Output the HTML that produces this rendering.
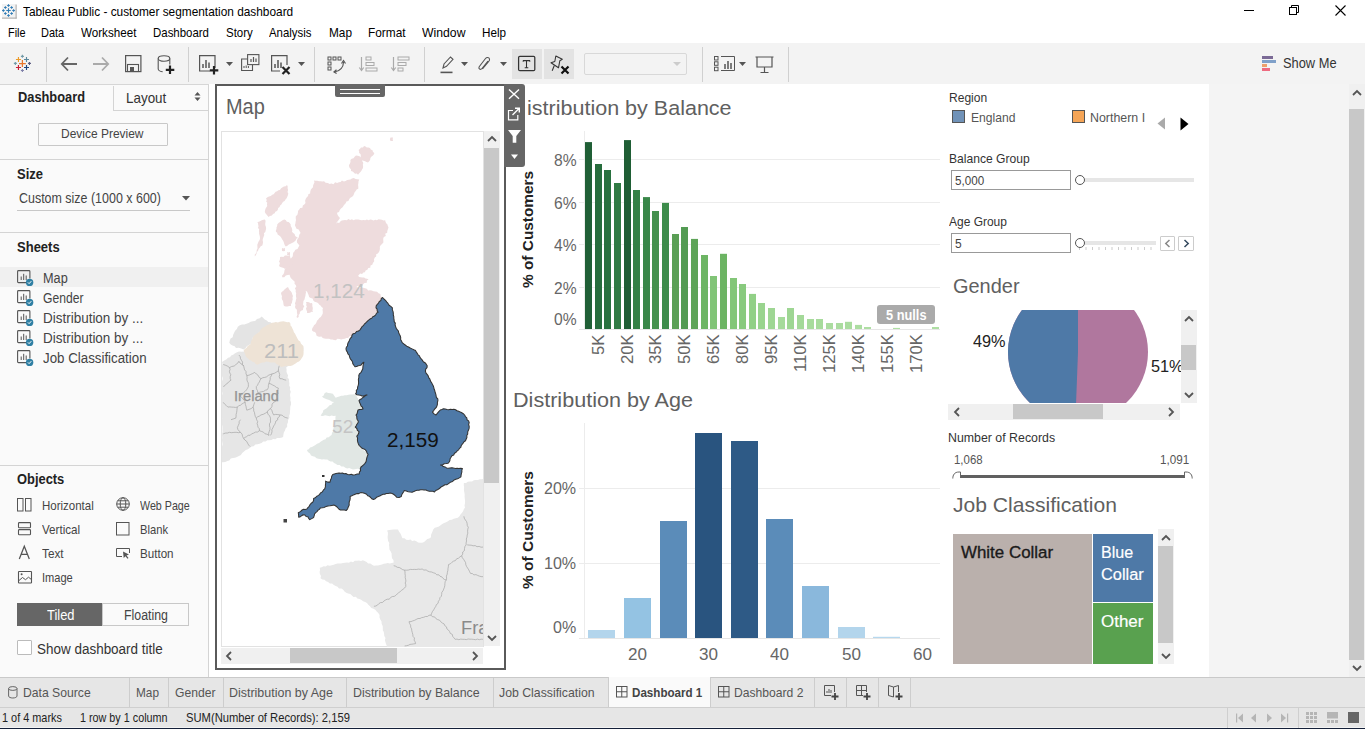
<!DOCTYPE html>
<html><head><meta charset="utf-8">
<style>
*{box-sizing:border-box;margin:0;padding:0}
html,body{width:1365px;height:729px;overflow:hidden;background:#fff;font-family:"Liberation Sans",sans-serif;color:#333;position:relative}
.a{position:absolute}
.t{position:absolute;white-space:nowrap;line-height:1}
svg{position:absolute;overflow:visible}
</style></head><body>
<div class="a" style="left:0.00px;top:0.00px;width:1365.00px;height:43.00px;background:#fff;"></div>
<svg style="left:0;top:0" width="22" height="22" viewBox="0 0 22 22">
 <rect x="2" y="4" width="13.5" height="13.5" fill="#f2f2f2"/>
 <rect x="15.5" y="4.5" width="1.2" height="14" fill="#b0b0b0"/><rect x="2" y="17.5" width="14.7" height="1.2" fill="#b0b0b0"/>
 <g stroke="#2e7bb5" fill="none">
  <path d="M8.5 8.3v4.4M6.3 10.5h4.4" stroke-width="1.1"/>
  <path d="M8.5 4.2v2.6M7.2 5.5h2.6M5.4 6.2v2.6M4.1 7.5h2.6M11.6 6.2v2.6M10.3 7.5h2.6M3.4 9.2v2.6M2.1 10.5h2.6M13.6 9.2v2.6M12.3 10.5h2.6M5.4 12.2v2.6M4.1 13.5h2.6M11.6 12.2v2.6M10.3 13.5h2.6M8.5 14.2v2.6M7.2 15.5h2.6" stroke-width="1.1"/>
 </g>
</svg>
<div class="t" style="left:23.00px;top:5.41px;font-size:13.64px;color:#000;transform:scaleX(0.8701);transform-origin:0 0;">Tableau Public - customer segmentation dashboard</div>
<div class="a" style="left:1244.00px;top:10.00px;width:10.00px;height:1.00px;background:#000;"></div>
<svg style="left:1289px;top:5px" width="11" height="11"><rect x="0.5" y="2.5" width="7" height="7" fill="none" stroke="#000"/><path d="M2.5 2.5V0.5H9.5V7.5H7.5" fill="none" stroke="#000"/></svg>
<svg style="left:1335px;top:5px" width="11" height="11"><path d="M0.5 0.5L10.5 10.5M10.5 0.5L0.5 10.5" stroke="#000" stroke-width="1.1"/></svg>
<div class="t" style="left:7.50px;top:27.29px;font-size:12.60px;color:#000;transform:scaleX(0.8668);transform-origin:0 0;">File</div>
<div class="t" style="left:41.10px;top:27.29px;font-size:12.60px;color:#000;transform:scaleX(0.8717);transform-origin:0 0;">Data</div>
<div class="t" style="left:81.10px;top:27.29px;font-size:12.60px;color:#000;transform:scaleX(0.9234);transform-origin:0 0;">Worksheet</div>
<div class="t" style="left:153.30px;top:27.29px;font-size:12.60px;color:#000;transform:scaleX(0.9085);transform-origin:0 0;">Dashboard</div>
<div class="t" style="left:226.00px;top:27.29px;font-size:12.60px;color:#000;transform:scaleX(0.9113);transform-origin:0 0;">Story</div>
<div class="t" style="left:269.20px;top:27.29px;font-size:12.60px;color:#000;transform:scaleX(0.9058);transform-origin:0 0;">Analysis</div>
<div class="t" style="left:328.50px;top:27.29px;font-size:12.60px;color:#000;transform:scaleX(0.9383);transform-origin:0 0;">Map</div>
<div class="t" style="left:368.30px;top:27.29px;font-size:12.60px;color:#000;transform:scaleX(0.9422);transform-origin:0 0;">Format</div>
<div class="t" style="left:422.10px;top:27.29px;font-size:12.60px;color:#000;transform:scaleX(0.9707);transform-origin:0 0;">Window</div>
<div class="t" style="left:482.40px;top:27.29px;font-size:12.60px;color:#000;transform:scaleX(0.9300);transform-origin:0 0;">Help</div>
<div class="a" style="left:0.00px;top:43.00px;width:1365.00px;height:41.00px;background:#f3f3f3;"></div>
<div class="a" style="left:0.00px;top:84.00px;width:209.00px;height:1.00px;background:#d6d6d6;"></div>
<div class="a" style="left:46.00px;top:47.00px;width:1.00px;height:35.00px;background:#d0d0d0;"></div>
<div class="a" style="left:188.00px;top:47.00px;width:1.00px;height:35.00px;background:#d0d0d0;"></div>
<div class="a" style="left:314.00px;top:47.00px;width:1.00px;height:35.00px;background:#d0d0d0;"></div>
<div class="a" style="left:424.00px;top:47.00px;width:1.00px;height:35.00px;background:#d0d0d0;"></div>
<div class="a" style="left:702.00px;top:47.00px;width:1.00px;height:35.00px;background:#d0d0d0;"></div>
<div class="a" style="left:788.00px;top:47.00px;width:1.00px;height:35.00px;background:#d0d0d0;"></div>
<svg style="left:10px;top:51px" width="26" height="26" viewBox="0 0 26 26">
 <g fill="none">
 <path d="M12.4 9.1v6.8M9 12.5h6.8" stroke="#e8762c" stroke-width="1.25"/>
 <path d="M8.45 5.95v5M5.95 8.45h5" stroke="#eb9b2b" stroke-width="1.15"/>
 <path d="M16.5 5.95v5M14 8.45h5" stroke="#5b879b" stroke-width="1.15"/>
 <path d="M8.45 14v5M5.95 16.5h5" stroke="#c72037" stroke-width="1.15"/>
 <path d="M16.5 14v5M14 16.5h5" stroke="#1f457e" stroke-width="1.15"/>
 <path d="M12.4 3.85v3M10.9 5.35h3" stroke="#7199a6" stroke-width="1.1"/>
 <path d="M12.4 17.95v3M10.9 19.45h3" stroke="#7e7fa8" stroke-width="1.1"/>
 <path d="M5.35 10.9v3M3.85 12.4h3" stroke="#7199a6" stroke-width="1.1"/>
 <path d="M19.45 10.9v3M17.95 12.4h3" stroke="#59597f" stroke-width="1.1"/>
 </g></svg>
<svg style="left:60px;top:56px" width="18" height="16"><path d="M17 8H2M8 1.5L1.8 8L8 14.5" fill="none" stroke="#666" stroke-width="1.8"/></svg>
<svg style="left:92px;top:56px" width="18" height="16"><path d="M1 8H16M10 1.5L16.2 8L10 14.5" fill="none" stroke="#aaa" stroke-width="1.8"/></svg>
<svg style="left:125px;top:55px" width="17" height="18"><rect x="0.6" y="0.6" width="15.3" height="16" fill="none" stroke="#555" stroke-width="1.2"/><rect x="2.5" y="9.5" width="11" height="7" fill="none" stroke="#555" stroke-width="1.1"/><rect x="5" y="12" width="4" height="4.5" fill="#555"/></svg>
<svg style="left:157px;top:55px" width="18" height="20"><ellipse cx="7" cy="3.5" rx="5.8" ry="2.7" fill="none" stroke="#555" stroke-width="1.1"/><path d="M1.2 3.5v10.5c0 1.5 2.5 2.6 4.5 2.7M12.8 3.5v6" fill="none" stroke="#555" stroke-width="1.1"/><path d="M13 10.5v8.5M8.8 14.8h8.5" stroke="#222" stroke-width="2.2"/></svg>
<svg style="left:199px;top:55px" width="22" height="20"><path d="M16 13V0.6H0.6V16H11" fill="none" stroke="#555" stroke-width="1.2"/><path d="M4 13V9M7 13V5M10 13V7.5" stroke="#555" stroke-width="1.5"/><path d="M15 11v8.5M10.8 15.3h8.5" stroke="#222" stroke-width="2.2"/></svg>
<svg style="left:226px;top:62px" width="7" height="4"><path d="M0 0H7L3.5 4Z" fill="#555"/></svg>
<svg style="left:241px;top:54px" width="19" height="18"><rect x="6.6" y="0.6" width="11.3" height="10" fill="#f3f3f3" stroke="#555" stroke-width="1.1"/><path d="M10 8V5M12.5 8V3M15 8V4.5" stroke="#555" stroke-width="1.2"/><path d="M6 5H0.6V16.5H11.5V11" fill="none" stroke="#555" stroke-width="1.1"/><path d="M3 14V12M5.2 14V11.5M7.4 14V12" stroke="#555" stroke-width="1"/></svg>
<svg style="left:271px;top:55px" width="22" height="20"><path d="M16 10V0.6H0.6V16H9" fill="none" stroke="#555" stroke-width="1.2"/><path d="M4 13V9M7 13V5M10 13V7.5" stroke="#555" stroke-width="1.5"/><path d="M11.5 12l7 7M18.5 12l-7 7" stroke="#222" stroke-width="2.2"/></svg>
<svg style="left:298px;top:62px" width="7" height="4"><path d="M0 0H7L3.5 4Z" fill="#555"/></svg>
<svg style="left:327px;top:56px" width="19" height="19"><g fill="none" stroke="#555" stroke-width="1">
<rect x="1" y="1" width="3" height="3"/><rect x="6" y="1" width="3" height="3"/><rect x="11" y="1" width="3" height="3"/>
<rect x="1" y="6" width="3" height="3"/><rect x="1" y="11" width="3" height="3"/></g>
<path d="M16.5 6c0 5-3.5 9-9 10" fill="none" stroke="#555" stroke-width="1.2"/><path d="M14.5 7.5l2-3 2 3M9.5 13.8l-2.5 2.2 2.6 1.6" fill="none" stroke="#555" stroke-width="1.2"/></svg>
<svg style="left:359px;top:56px" width="20" height="18"><path d="M2.5 1v13M0.3 11.5l2.2 3 2.2-3" fill="none" stroke="#aaa" stroke-width="1.2"/><rect x="7" y="1" width="5" height="3" fill="none" stroke="#aaa"/><rect x="7" y="6.5" width="8" height="3" fill="none" stroke="#aaa"/><rect x="7" y="12" width="11" height="3" fill="none" stroke="#aaa"/></svg>
<svg style="left:391px;top:56px" width="20" height="18"><path d="M2.5 1v13M0.3 11.5l2.2 3 2.2-3" fill="none" stroke="#aaa" stroke-width="1.2"/><rect x="7" y="1" width="11" height="3" fill="none" stroke="#aaa"/><rect x="7" y="6.5" width="8" height="3" fill="none" stroke="#aaa"/><rect x="7" y="12" width="5" height="3" fill="none" stroke="#aaa"/></svg>
<svg style="left:440px;top:56px" width="14" height="18"><path d="M3 12l1-4 6.5-7 2.5 2.3-6.5 7z" fill="none" stroke="#555" stroke-width="1.1"/><rect x="0.5" y="15.6" width="12" height="1.6" fill="#555"/></svg>
<svg style="left:461px;top:62px" width="7" height="4"><path d="M0 0H7L3.5 4Z" fill="#555"/></svg>
<svg style="left:477px;top:56px" width="15" height="17"><path d="M11 5L5 12.5c-1.5 1.8-4 0.3-2.8-1.8L8.5 2.5c1-1.3 3.5-1.5 4 0.5 0.3 1-0.2 1.8-0.8 2.5L5.5 13" fill="none" stroke="#555" stroke-width="1.1"/></svg>
<svg style="left:500px;top:62px" width="7" height="4"><path d="M0 0H7L3.5 4Z" fill="#555"/></svg>
<div class="a" style="left:512.00px;top:49.00px;width:30.00px;height:30.00px;background:#e3e3e3;"></div>
<div class="a" style="left:544.00px;top:49.00px;width:30.00px;height:30.00px;background:#e3e3e3;"></div>
<svg style="left:517px;top:55px" width="20" height="18"><rect x="1.6" y="1.4" width="16.2" height="14.2" rx="1.2" fill="none" stroke="#333" stroke-width="1.25"/><path d="M6 5.6h7M6.2 5.4v1.4M12.8 5.4v1.4M9.5 5.6v7.2M7.7 12.7h3.6" fill="none" stroke="#333" stroke-width="1.05"/></svg>
<svg style="left:545px;top:50px" width="30" height="30"><path d="M10.8 6L17.3 9.3L14.8 10.8L13.5 17.8L6 12.8L9.8 11.5Z" fill="none" stroke="#333" stroke-width="1.05" stroke-linejoin="round"/><path d="M9.3 15.5L7.2 20.8" stroke="#333" stroke-width="1.05"/><path d="M16.5 16.5L23.5 23.5M23.5 16.5L16.5 23.5" stroke="#111" stroke-width="2.2"/></svg>
<div class="a" style="left:583.5px;top:52.5px;width:103px;height:22px;border:1px solid #d8d8d8;border-radius:2px;background:#f3f3f3"></div>
<svg style="left:673px;top:62px" width="8" height="5"><path d="M0 0H8L4 4Z" fill="#ccc"/></svg>
<svg style="left:714px;top:56px" width="22" height="16"><g fill="none" stroke="#555" stroke-width="1"><rect x="0.5" y="0.5" width="3.5" height="3.5"/><rect x="0.5" y="5.8" width="3.5" height="3.5"/><rect x="0.5" y="11.2" width="3.5" height="3.5"/><path d="M7 0.5H20.5V14.5H7"/></g><path d="M11 13V8M14 13V5M17 13V7" stroke="#555" stroke-width="1.5"/></svg>
<svg style="left:739px;top:62px" width="7" height="4"><path d="M0 0H7L3.5 4Z" fill="#555"/></svg>
<svg style="left:755px;top:56px" width="19" height="18"><path d="M0.5 1h18M2 1v10h15V1M9.5 11v5M5.5 16.5h8" fill="none" stroke="#555" stroke-width="1.2"/></svg>
<div class="a" style="left:1262.00px;top:56.00px;width:11.00px;height:3.00px;background:#7b6a96;"></div>
<div class="a" style="left:1262.00px;top:60.00px;width:14.00px;height:3.00px;background:#7fa0c9;"></div>
<div class="a" style="left:1262.00px;top:64.00px;width:5.00px;height:3.00px;background:#eda06c;"></div>
<div class="a" style="left:1262.00px;top:68.00px;width:8.00px;height:3.00px;background:#ee6b80;"></div>
<div class="t" style="left:1282.50px;top:56.38px;font-size:14.85px;color:#333;transform:scaleX(0.8659);transform-origin:0 0;">Show Me</div>
<div class="a" style="left:0.00px;top:85.00px;width:208.00px;height:592.00px;background:#fafafa;"></div>
<div class="a" style="left:208.00px;top:85.00px;width:1.00px;height:592.00px;background:#d4d4d4;"></div>
<div class="a" style="left:113.00px;top:86.00px;width:1.00px;height:24.00px;background:#d4d4d4;"></div>
<div class="a" style="left:113.00px;top:110.00px;width:95.00px;height:1.00px;background:#d4d4d4;"></div>
<div class="t" style="left:17.50px;top:90.28px;font-size:14.96px;color:#222;font-weight:bold;transform:scaleX(0.8574);transform-origin:0 0;">Dashboard</div>
<div class="t" style="left:126.20px;top:90.84px;font-size:14.30px;color:#333;transform:scaleX(0.9386);transform-origin:0 0;">Layout</div>
<svg style="left:194px;top:91px" width="7" height="11"><path d="M0.5 4.5L3.5 1L6.5 4.5Z M0.5 6.5L3.5 10L6.5 6.5Z" fill="#555"/></svg>
<div class="a" style="left:38px;top:123px;width:130px;height:23px;border:1px solid #c8c8c8;background:#fafafa;border-radius:1px"></div>
<div class="t" style="left:61.30px;top:127.41px;font-size:13.64px;color:#444;transform:scaleX(0.8787);transform-origin:0 0;">Device Preview</div>
<div class="a" style="left:0.00px;top:159.00px;width:208.00px;height:1.00px;background:#d4d4d4;"></div>
<div class="t" style="left:17.30px;top:167.47px;font-size:14.74px;color:#222;font-weight:bold;transform:scaleX(0.8815);transform-origin:0 0;">Size</div>
<div class="t" style="left:18.50px;top:192.31px;font-size:13.75px;color:#444;transform:scaleX(0.9057);transform-origin:0 0;">Custom size (1000 x 600)</div>
<svg style="left:182px;top:196px" width="8" height="5"><path d="M0 0H8L4 4.5Z" fill="#555"/></svg>
<div class="a" style="left:17.00px;top:210.00px;width:173.00px;height:1.00px;background:#c8c8c8;"></div>
<div class="a" style="left:0.00px;top:232.00px;width:208.00px;height:1.00px;background:#d4d4d4;"></div>
<div class="t" style="left:17.30px;top:240.47px;font-size:14.74px;color:#222;font-weight:bold;transform:scaleX(0.8833);transform-origin:0 0;">Sheets</div>
<div class="a" style="left:0.00px;top:267.00px;width:208.00px;height:20.00px;background:#f0f0f0;"></div>
<svg style="left:17px;top:270px" width="18" height="18"><path d="M9.8 12.6H1.5Q0.6 12.6 0.6 11.7V1.5Q0.6 0.6 1.5 0.6H12Q12.9 0.6 12.9 1.5V8.5" fill="none" stroke="#555" stroke-width="1.1"/><path d="M4.2 10V6.5M6.7 10V3.8M9.2 10V5.5" stroke="#555" stroke-width="1"/><circle cx="12.6" cy="12.4" r="3.7" fill="#2f7fa3"/><path d="M10.9 12.4l1.2 1.2 2.2-2.4" fill="none" stroke="#fff" stroke-width="1"/></svg>
<div class="t" style="left:42.50px;top:270.66px;font-size:14.52px;color:#444;transform:scaleX(0.8744);transform-origin:0 0;">Map</div>
<svg style="left:17px;top:290px" width="18" height="18"><path d="M9.8 12.6H1.5Q0.6 12.6 0.6 11.7V1.5Q0.6 0.6 1.5 0.6H12Q12.9 0.6 12.9 1.5V8.5" fill="none" stroke="#555" stroke-width="1.1"/><path d="M4.2 10V6.5M6.7 10V3.8M9.2 10V5.5" stroke="#555" stroke-width="1"/><circle cx="12.6" cy="12.4" r="3.7" fill="#2f7fa3"/><path d="M10.9 12.4l1.2 1.2 2.2-2.4" fill="none" stroke="#fff" stroke-width="1"/></svg>
<div class="t" style="left:42.50px;top:290.66px;font-size:14.52px;color:#444;transform:scaleX(0.8362);transform-origin:0 0;">Gender</div>
<svg style="left:17px;top:310px" width="18" height="18"><path d="M9.8 12.6H1.5Q0.6 12.6 0.6 11.7V1.5Q0.6 0.6 1.5 0.6H12Q12.9 0.6 12.9 1.5V8.5" fill="none" stroke="#555" stroke-width="1.1"/><path d="M4.2 10V6.5M6.7 10V3.8M9.2 10V5.5" stroke="#555" stroke-width="1"/><circle cx="12.6" cy="12.4" r="3.7" fill="#2f7fa3"/><path d="M10.9 12.4l1.2 1.2 2.2-2.4" fill="none" stroke="#fff" stroke-width="1"/></svg>
<div class="t" style="left:42.50px;top:310.66px;font-size:14.52px;color:#444;transform:scaleX(0.9275);transform-origin:0 0;">Distribution by ...</div>
<svg style="left:17px;top:330px" width="18" height="18"><path d="M9.8 12.6H1.5Q0.6 12.6 0.6 11.7V1.5Q0.6 0.6 1.5 0.6H12Q12.9 0.6 12.9 1.5V8.5" fill="none" stroke="#555" stroke-width="1.1"/><path d="M4.2 10V6.5M6.7 10V3.8M9.2 10V5.5" stroke="#555" stroke-width="1"/><circle cx="12.6" cy="12.4" r="3.7" fill="#2f7fa3"/><path d="M10.9 12.4l1.2 1.2 2.2-2.4" fill="none" stroke="#fff" stroke-width="1"/></svg>
<div class="t" style="left:42.50px;top:330.66px;font-size:14.52px;color:#444;transform:scaleX(0.9275);transform-origin:0 0;">Distribution by ...</div>
<svg style="left:17px;top:350px" width="18" height="18"><path d="M9.8 12.6H1.5Q0.6 12.6 0.6 11.7V1.5Q0.6 0.6 1.5 0.6H12Q12.9 0.6 12.9 1.5V8.5" fill="none" stroke="#555" stroke-width="1.1"/><path d="M4.2 10V6.5M6.7 10V3.8M9.2 10V5.5" stroke="#555" stroke-width="1"/><circle cx="12.6" cy="12.4" r="3.7" fill="#2f7fa3"/><path d="M10.9 12.4l1.2 1.2 2.2-2.4" fill="none" stroke="#fff" stroke-width="1"/></svg>
<div class="t" style="left:42.50px;top:350.66px;font-size:14.52px;color:#444;transform:scaleX(0.9169);transform-origin:0 0;">Job Classification</div>
<div class="a" style="left:0.00px;top:465.00px;width:208.00px;height:1.00px;background:#d4d4d4;"></div>
<div class="t" style="left:17.30px;top:472.47px;font-size:14.74px;color:#222;font-weight:bold;transform:scaleX(0.8748);transform-origin:0 0;">Objects</div>
<div class="t" style="left:42.40px;top:498.97px;font-size:12.98px;color:#444;transform:scaleX(0.8864);transform-origin:0 0;">Horizontal</div>
<div class="t" style="left:42.40px;top:522.97px;font-size:12.98px;color:#444;transform:scaleX(0.8974);transform-origin:0 0;">Vertical</div>
<div class="t" style="left:42.40px;top:546.97px;font-size:12.98px;color:#444;transform:scaleX(0.9074);transform-origin:0 0;">Text</div>
<div class="t" style="left:42.40px;top:570.97px;font-size:12.98px;color:#444;transform:scaleX(0.8537);transform-origin:0 0;">Image</div>
<div class="t" style="left:140.20px;top:498.97px;font-size:12.98px;color:#444;transform:scaleX(0.8248);transform-origin:0 0;">Web Page</div>
<div class="t" style="left:140.20px;top:522.97px;font-size:12.98px;color:#444;transform:scaleX(0.8623);transform-origin:0 0;">Blank</div>
<div class="t" style="left:140.20px;top:546.97px;font-size:12.98px;color:#444;transform:scaleX(0.8953);transform-origin:0 0;">Button</div>
<svg style="left:17px;top:498px" width="15" height="14"><rect x="0.5" y="0.5" width="5.5" height="12.5" fill="none" stroke="#555"/><rect x="8.5" y="0.5" width="5.5" height="12.5" fill="none" stroke="#555"/></svg>
<svg style="left:17px;top:522px" width="15" height="14"><rect x="1.5" y="0.6" width="12" height="5.2" rx="0.8" fill="none" stroke="#555" stroke-width="1.1"/><rect x="1.5" y="7.6" width="12" height="5.2" rx="0.8" fill="none" stroke="#555" stroke-width="1.1"/></svg>
<svg style="left:18px;top:545px" width="13" height="15"><path d="M1.3 14L6.3 1.2L11.3 14M3.2 9.3h6.2" fill="none" stroke="#555" stroke-width="1.25"/></svg>
<svg style="left:17px;top:570px" width="16" height="14"><rect x="1.5" y="1.5" width="13" height="11.5" rx="0.6" fill="none" stroke="#555" stroke-width="1.1"/><path d="M2 10.5l3.5-3 3 2.2 3-2.5 2.5 2" fill="none" stroke="#555" stroke-width="1"/><circle cx="4.6" cy="4.3" r="1" fill="#555"/></svg>
<svg style="left:116px;top:497px" width="15" height="15"><g fill="none" stroke="#555" stroke-width="1"><circle cx="7" cy="7" r="6.3"/><ellipse cx="7" cy="7" rx="2.8" ry="6.3"/><path d="M0.7 7h12.6M1.8 3.8h10.4M1.8 10.2h10.4"/></g></svg>
<svg style="left:116px;top:522px" width="15" height="15"><rect x="0.5" y="0.5" width="12.5" height="12.5" fill="none" stroke="#555"/></svg>
<svg style="left:116px;top:548px" width="15" height="12"><path d="M6 8.5H0.5V0.5H13.5V5" fill="none" stroke="#555"/><path d="M7 3.5l6 3-2.5 1 2 2.5-1 .8-2-2.5-1.8 1.8z" fill="#555"/></svg>
<div class="a" style="left:17.00px;top:603.00px;width:86.00px;height:23.00px;background:#666;"></div>
<div class="a" style="left:102px;top:603px;width:87px;height:23px;border:1px solid #c8c8c8;background:#fafafa"></div>
<div class="t" style="left:46.50px;top:608.03px;font-size:14.08px;color:#fff;transform:scaleX(0.9168);transform-origin:0 0;">Tiled</div>
<div class="t" style="left:123.50px;top:608.03px;font-size:14.08px;color:#444;transform:scaleX(0.8784);transform-origin:0 0;">Floating</div>
<div class="a" style="left:17px;top:640px;width:15px;height:15px;border:1px solid #bbb;background:#fff;border-radius:1px"></div>
<div class="t" style="left:37.00px;top:641.66px;font-size:14.52px;color:#333;transform:scaleX(0.9277);transform-origin:0 0;">Show dashboard title</div>
<div class="a" style="left:209.00px;top:84.00px;width:1140.00px;height:593.00px;background:#f4f4f4;"></div>
<div class="a" style="left:209.00px;top:84.00px;width:1000.00px;height:593.00px;background:#fff;"></div>
<div class="a" style="left:1349.00px;top:84.00px;width:16.00px;height:593.00px;background:#f0f0f0;"></div>
<div class="a" style="left:1349.00px;top:109.00px;width:15.00px;height:551.00px;background:#c8c8c8;"></div>
<svg style="left:1352px;top:90px" width="10" height="6"><path d="M1 5L5 1L9 5" fill="none" stroke="#555" stroke-width="1.8"/></svg>
<svg style="left:1352px;top:665px" width="10" height="6"><path d="M1 1L5 5L9 1" fill="none" stroke="#555" stroke-width="1.8"/></svg>
<div class="a" style="left:525px;top:90px;width:220px;height:30px;overflow:hidden"><div class="t" style="left:1.70px;top:6.55px;font-size:21.12px;color:#606060;transform:scaleX(1.0196);transform-origin:0 0;">istribution by Balance</div>
</div>
<div class="a" style="left:584.00px;top:131.00px;width:1.00px;height:198.00px;background:#ececec;"></div>
<div class="a" style="left:579.00px;top:159.00px;width:361.00px;height:1.00px;background:#ececec;"></div>
<div class="a" style="left:579.00px;top:202.00px;width:361.00px;height:1.00px;background:#ececec;"></div>
<div class="a" style="left:579.00px;top:244.00px;width:361.00px;height:1.00px;background:#ececec;"></div>
<div class="a" style="left:579.00px;top:287.00px;width:361.00px;height:1.00px;background:#ececec;"></div>
<div class="a" style="left:579.00px;top:329.00px;width:361.00px;height:1.00px;background:#e6e6e6;"></div>
<svg style="left:0;top:0" width="1365" height="729"><rect x="585" y="142.1" width="7" height="186.9" fill="#205f36"/><rect x="595" y="164.0" width="7" height="165.0" fill="#276d3d"/><rect x="604" y="170.0" width="7" height="159.0" fill="#29713f"/><rect x="614" y="183.0" width="7" height="146.0" fill="#307b44"/><rect x="624" y="140.1" width="7" height="188.9" fill="#1f5e35"/><rect x="633" y="190.0" width="7" height="139.0" fill="#348146"/><rect x="643" y="197.1" width="7" height="131.9" fill="#398749"/><rect x="652" y="211.0" width="7" height="118.0" fill="#45914e"/><rect x="662" y="202.9" width="7" height="126.1" fill="#3d8c4b"/><rect x="672" y="234.0" width="7" height="95.0" fill="#5a9f55"/><rect x="681" y="227.0" width="7" height="102.0" fill="#539b53"/><rect x="691" y="238.9" width="7" height="90.1" fill="#5ea458"/><rect x="701" y="255.0" width="7" height="74.0" fill="#6db564"/><rect x="710" y="276.0" width="7" height="53.0" fill="#81c477"/><rect x="720" y="253.8" width="7" height="75.2" fill="#6cb463"/><rect x="730" y="278.0" width="7" height="51.0" fill="#83c678"/><rect x="739" y="284.0" width="7" height="45.0" fill="#88ca7e"/><rect x="749" y="293.9" width="7" height="35.1" fill="#91d086"/><rect x="758" y="303.0" width="7" height="26.0" fill="#99d48e"/><rect x="768" y="308.0" width="7" height="21.0" fill="#9ed693"/><rect x="778" y="317.0" width="7" height="12.0" fill="#a6da9b"/><rect x="787" y="308.0" width="7" height="21.0" fill="#9ed693"/><rect x="797" y="315.0" width="7" height="14.0" fill="#a4d999"/><rect x="807" y="319.0" width="7" height="10.0" fill="#a7db9c"/><rect x="816" y="319.0" width="7" height="10.0" fill="#a7db9c"/><rect x="826" y="323.0" width="7" height="6.0" fill="#abdca0"/><rect x="836" y="323.0" width="7" height="6.0" fill="#abdca0"/><rect x="845" y="321.8" width="7" height="7.2" fill="#aadc9f"/><rect x="855" y="324.9" width="7" height="4.1" fill="#acdda1"/><rect x="864" y="327.0" width="7" height="2.0" fill="#aedea3"/><rect x="893" y="327.9" width="7" height="1.1" fill="#afdfa4"/><rect x="932" y="327.0" width="7" height="2.0" fill="#aedea3"/></svg>
<div class="t" style="left:553.70px;top:151.67px;font-size:16.50px;color:#666;transform:scaleX(0.9477);transform-origin:0 0;">8%</div>
<div class="t" style="left:553.70px;top:194.67px;font-size:16.50px;color:#666;transform:scaleX(0.9477);transform-origin:0 0;">6%</div>
<div class="t" style="left:553.70px;top:236.67px;font-size:16.50px;color:#666;transform:scaleX(0.9477);transform-origin:0 0;">4%</div>
<div class="t" style="left:553.70px;top:279.68px;font-size:16.50px;color:#666;transform:scaleX(0.9477);transform-origin:0 0;">2%</div>
<div class="t" style="left:553.70px;top:310.68px;font-size:16.50px;color:#666;transform:scaleX(0.9477);transform-origin:0 0;">0%</div>
<div class="t" style="left:519.80px;top:287.50px;font-size:15.40px;color:#222;font-weight:bold;transform:rotate(-90deg);transform-origin:0 0;">% of Customers</div>
<div class="t" style="left:590.64px;top:354.65px;font-size:16.00px;color:#666;transform:rotate(-90deg) scaleX(1.0400);transform-origin:0 0;">5K</div>
<div class="t" style="left:619.54px;top:363.91px;font-size:16.00px;color:#666;transform:rotate(-90deg) scaleX(1.0400);transform-origin:0 0;">20K</div>
<div class="t" style="left:648.45px;top:363.91px;font-size:16.00px;color:#666;transform:rotate(-90deg) scaleX(1.0400);transform-origin:0 0;">35K</div>
<div class="t" style="left:677.36px;top:363.91px;font-size:16.00px;color:#666;transform:rotate(-90deg) scaleX(1.0400);transform-origin:0 0;">50K</div>
<div class="t" style="left:706.27px;top:363.91px;font-size:16.00px;color:#666;transform:rotate(-90deg) scaleX(1.0400);transform-origin:0 0;">65K</div>
<div class="t" style="left:735.18px;top:363.91px;font-size:16.00px;color:#666;transform:rotate(-90deg) scaleX(1.0400);transform-origin:0 0;">80K</div>
<div class="t" style="left:764.08px;top:363.91px;font-size:16.00px;color:#666;transform:rotate(-90deg) scaleX(1.0400);transform-origin:0 0;">95K</div>
<div class="t" style="left:792.99px;top:371.93px;font-size:16.00px;color:#666;transform:rotate(-90deg) scaleX(1.0400);transform-origin:0 0;">110K</div>
<div class="t" style="left:821.90px;top:373.16px;font-size:16.00px;color:#666;transform:rotate(-90deg) scaleX(1.0400);transform-origin:0 0;">125K</div>
<div class="t" style="left:850.81px;top:373.16px;font-size:16.00px;color:#666;transform:rotate(-90deg) scaleX(1.0400);transform-origin:0 0;">140K</div>
<div class="t" style="left:879.72px;top:373.16px;font-size:16.00px;color:#666;transform:rotate(-90deg) scaleX(1.0400);transform-origin:0 0;">155K</div>
<div class="t" style="left:908.62px;top:373.16px;font-size:16.00px;color:#666;transform:rotate(-90deg) scaleX(1.0400);transform-origin:0 0;">170K</div>
<div class="a" style="left:877px;top:305px;width:58px;height:18.5px;background:#aaa;border-radius:3px"></div>
<div class="t" style="left:886.00px;top:308.35px;font-size:14.30px;color:#fff;font-weight:bold;transform:scaleX(0.8941);transform-origin:0 0;">5 nulls</div>
<div class="t" style="left:513.20px;top:389.15px;font-size:21.12px;color:#606060;transform:scaleX(1.0227);transform-origin:0 0;">Distribution by Age</div>
<div class="a" style="left:584.00px;top:423.00px;width:1.00px;height:215.00px;background:#ececec;"></div>
<div class="a" style="left:579.00px;top:488.00px;width:361.00px;height:1.00px;background:#ececec;"></div>
<div class="a" style="left:579.00px;top:563.00px;width:361.00px;height:1.00px;background:#ececec;"></div>
<div class="a" style="left:579.00px;top:638.00px;width:361.00px;height:1.00px;background:#e6e6e6;"></div>
<svg style="left:0;top:0" width="1365" height="729"><rect x="588" y="630.0" width="27" height="8.0" fill="#b3d5ec"/><rect x="624" y="598.0" width="27" height="40.0" fill="#94c3e3"/><rect x="660" y="521.0" width="27" height="117.0" fill="#5b8cb9"/><rect x="695" y="433.0" width="27" height="205.0" fill="#29547f"/><rect x="731" y="441.0" width="27" height="197.0" fill="#2e5a86"/><rect x="766" y="519.0" width="27" height="119.0" fill="#5b8cb9"/><rect x="802" y="586.0" width="27" height="52.0" fill="#8ab8dc"/><rect x="838" y="627.0" width="27" height="11.0" fill="#b3d5ec"/><rect x="873" y="636.8" width="27" height="1.2" fill="#b6d8ee"/></svg>
<div class="t" style="left:544.18px;top:480.18px;font-size:16.50px;color:#666;transform:scaleX(0.9727);transform-origin:0 0;">20%</div>
<div class="t" style="left:544.18px;top:555.18px;font-size:16.50px;color:#666;transform:scaleX(0.9727);transform-origin:0 0;">10%</div>
<div class="t" style="left:553.10px;top:619.18px;font-size:16.50px;color:#666;transform:scaleX(0.9727);transform-origin:0 0;">0%</div>
<div class="t" style="left:519.80px;top:588.50px;font-size:15.40px;color:#222;font-weight:bold;transform:rotate(-90deg) scaleX(1.0066);transform-origin:0 0;">% of Customers</div>
<div class="t" style="left:627.80px;top:646.18px;font-size:16.50px;color:#666;transform:scaleX(1.0352);transform-origin:0 0;">20</div>
<div class="t" style="left:698.50px;top:646.18px;font-size:16.50px;color:#666;transform:scaleX(1.0352);transform-origin:0 0;">30</div>
<div class="t" style="left:769.50px;top:646.18px;font-size:16.50px;color:#666;transform:scaleX(1.0352);transform-origin:0 0;">40</div>
<div class="t" style="left:841.50px;top:646.18px;font-size:16.50px;color:#666;transform:scaleX(1.0352);transform-origin:0 0;">50</div>
<div class="t" style="left:912.50px;top:646.18px;font-size:16.50px;color:#666;transform:scaleX(1.0352);transform-origin:0 0;">60</div>
<div class="t" style="left:948.80px;top:90.67px;font-size:12.98px;color:#333;transform:scaleX(0.9287);transform-origin:0 0;">Region</div>
<div class="a" style="left:952.00px;top:110.00px;width:13.00px;height:13.00px;background:#7092b8;border:1px solid #555;"></div>
<div class="t" style="left:970.60px;top:110.89px;font-size:13.42px;color:#555;transform:scaleX(0.9035);transform-origin:0 0;">England</div>
<div class="a" style="left:1072.00px;top:110.00px;width:13.00px;height:13.00px;background:#f5a557;border:1px solid #555;"></div>
<div class="a" style="left:1090px;top:105px;width:55px;height:20px;overflow:hidden"><div class="t" style="left:0.40px;top:5.89px;font-size:13.42px;color:#555;transform:scaleX(0.9250);transform-origin:0 0;">Northern Ireland</div>
</div>
<svg style="left:1157px;top:117px" width="9" height="13"><path d="M8 0.5V12.5L0.5 6.5Z" fill="#aaa"/></svg>
<svg style="left:1180px;top:117px" width="9" height="14"><path d="M0.5 0.5V13.5L8.5 7Z" fill="#000"/></svg>
<div class="t" style="left:948.80px;top:151.97px;font-size:12.98px;color:#333;transform:scaleX(0.9320);transform-origin:0 0;">Balance Group</div>
<div class="a" style="left:951px;top:170px;width:120px;height:20px;border:1px solid #999;background:#fff"></div>
<div class="t" style="left:955.00px;top:174.28px;font-size:13.20px;color:#444;transform:scaleX(0.8840);transform-origin:0 0;">5,000</div>
<div class="a" style="left:1083.00px;top:177.50px;width:111.00px;height:4.00px;background:#e6e6e6;"></div>
<div class="a" style="left:1074.5px;top:174.5px;width:10px;height:10px;border:1.2px solid #555;border-radius:50%;background:#fff"></div>
<div class="t" style="left:948.50px;top:214.97px;font-size:12.98px;color:#333;transform:scaleX(0.9239);transform-origin:0 0;">Age Group</div>
<div class="a" style="left:951px;top:233px;width:120px;height:20px;border:1px solid #999;background:#fff"></div>
<div class="t" style="left:955.40px;top:237.08px;font-size:13.20px;color:#444;transform:scaleX(0.9091);transform-origin:0 0;">5</div>
<div class="a" style="left:1083.00px;top:240.50px;width:73.00px;height:4.00px;background:#e6e6e6;"></div>
<svg style="left:1079px;top:247px" width="80" height="4"><rect x="0.0" y="0" width="1" height="3" fill="#ccc"/><rect x="6.5" y="0" width="1" height="3" fill="#ccc"/><rect x="13.0" y="0" width="1" height="3" fill="#ccc"/><rect x="19.5" y="0" width="1" height="3" fill="#ccc"/><rect x="26.0" y="0" width="1" height="3" fill="#ccc"/><rect x="32.5" y="0" width="1" height="3" fill="#ccc"/><rect x="39.0" y="0" width="1" height="3" fill="#ccc"/><rect x="45.5" y="0" width="1" height="3" fill="#ccc"/><rect x="52.0" y="0" width="1" height="3" fill="#ccc"/><rect x="58.5" y="0" width="1" height="3" fill="#ccc"/><rect x="65.0" y="0" width="1" height="3" fill="#ccc"/><rect x="71.5" y="0" width="1" height="3" fill="#ccc"/></svg>
<div class="a" style="left:1074.5px;top:237.5px;width:10px;height:10px;border:1.2px solid #555;border-radius:50%;background:#fff"></div>
<div class="a" style="left:1159.5px;top:235.5px;width:15px;height:15.5px;border:1px solid #ccc;background:#fff;border-radius:1px"></div>
<div class="a" style="left:1178px;top:235.5px;width:16px;height:15.5px;border:1px solid #ccc;background:#fff;border-radius:1px"></div>
<svg style="left:1163.5px;top:239px" width="7" height="9"><path d="M5.5 1L1.8 4.5L5.5 8" fill="none" stroke="#888" stroke-width="1.5"/></svg>
<svg style="left:1182.5px;top:239px" width="7" height="9"><path d="M1.5 1L5.2 4.5L1.5 8" fill="none" stroke="#34495e" stroke-width="1.5"/></svg>
<div class="t" style="left:953.00px;top:275.62px;font-size:20.68px;color:#606060;transform:scaleX(0.9655);transform-origin:0 0;">Gender</div>
<svg style="left:0;top:0" width="1365" height="729"><defs><clipPath id="pc"><rect x="947" y="310" width="234" height="93"/></clipPath></defs><g clip-path="url(#pc)"><circle cx="1078" cy="352" r="70" fill="#b0779e"/><path d="M1078 352 L1075.36 421.95 A70 70 0 0 1 1078 282 Z" fill="#4e79a7"/></g></svg>
<div class="t" style="left:973.20px;top:334.05px;font-size:15.71px;color:#222;transform:scaleX(1.0369);transform-origin:0 0;">49%</div>
<div class="a" style="left:1150px;top:355px;width:31px;height:22px;overflow:hidden"><div class="t" style="left:0.80px;top:4.05px;font-size:15.71px;color:#222;transform:scaleX(1.0369);transform-origin:0 0;">51%</div>
</div>
<div class="a" style="left:1181.00px;top:310.00px;width:16.00px;height:93.00px;background:#f0f0f0;"></div>
<div class="a" style="left:1181.00px;top:345.00px;width:15.00px;height:25.00px;background:#c8c8c8;"></div>
<svg style="left:1184.0px;top:316.0px" width="10" height="6"><path d="M1 5L5 1L9 5" fill="none" stroke="#555" stroke-width="1.8"/></svg>
<svg style="left:1184.0px;top:392.0px" width="10" height="6"><path d="M1 1L5 5L9 1" fill="none" stroke="#555" stroke-width="1.8"/></svg>
<div class="a" style="left:947.50px;top:404.00px;width:232.50px;height:15.50px;background:#f0f0f0;"></div>
<div class="a" style="left:1013.00px;top:404.00px;width:90.00px;height:14.50px;background:#c8c8c8;"></div>
<svg style="left:953.5px;top:406.8px" width="6" height="10"><path d="M5 1L1 5L5 9" fill="none" stroke="#555" stroke-width="1.8"/></svg>
<svg style="left:1168.0px;top:406.8px" width="6" height="10"><path d="M1 1L5 5L1 9" fill="none" stroke="#555" stroke-width="1.8"/></svg>
<div class="t" style="left:948.40px;top:430.97px;font-size:12.98px;color:#333;transform:scaleX(0.9526);transform-origin:0 0;">Number of Records</div>
<div class="t" style="left:953.60px;top:454.01px;font-size:12.10px;color:#555;transform:scaleX(0.9445);transform-origin:0 0;">1,068</div>
<div class="t" style="left:1160.30px;top:454.01px;font-size:12.10px;color:#555;transform:scaleX(0.9643);transform-origin:0 0;">1,091</div>
<svg style="left:950px;top:470px" width="246" height="12"><path d="M10 6.5H235" stroke="#606060" stroke-width="3.2"/><path d="M2.8 8.5C2.8 5 4.5 2 9 2H10.5V7.2M242.2 8.5C242.2 5 240.5 2 236 2H234.5V7.2" fill="none" stroke="#666" stroke-width="1"/></svg>
<div class="t" style="left:952.50px;top:495.24px;font-size:20.90px;color:#606060;transform:scaleX(1.0084);transform-origin:0 0;">Job Classification</div>
<div class="a" style="left:953.00px;top:534.00px;width:139.00px;height:130.00px;background:#bab0ac;"></div>
<div class="a" style="left:1093.00px;top:534.00px;width:60.00px;height:68.00px;background:#4e79a7;"></div>
<div class="a" style="left:1093.00px;top:603.00px;width:60.00px;height:61.00px;background:#59a14f;"></div>
<div class="t" style="left:960.90px;top:544.21px;font-size:17.16px;color:#1a1a1a;transform:scaleX(0.9855);transform-origin:0 0;-webkit-text-stroke:0.35px #1a1a1a;">White Collar</div>
<div class="t" style="left:1100.60px;top:544.21px;font-size:17.16px;color:#fff;transform:scaleX(0.9364);transform-origin:0 0;-webkit-text-stroke:0.2px #fff;">Blue</div>
<div class="t" style="left:1100.60px;top:566.11px;font-size:17.16px;color:#fff;transform:scaleX(0.9549);transform-origin:0 0;-webkit-text-stroke:0.2px #fff;">Collar</div>
<div class="t" style="left:1100.60px;top:613.31px;font-size:17.16px;color:#fff;transform:scaleX(0.9879);transform-origin:0 0;-webkit-text-stroke:0.2px #fff;">Other</div>
<div class="a" style="left:1158.00px;top:529.00px;width:16.00px;height:135.00px;background:#f0f0f0;"></div>
<div class="a" style="left:1158.00px;top:546.00px;width:15.00px;height:97.00px;background:#c8c8c8;"></div>
<svg style="left:1161.0px;top:535.0px" width="10" height="6"><path d="M1 5L5 1L9 5" fill="none" stroke="#555" stroke-width="1.8"/></svg>
<svg style="left:1161.0px;top:653.0px" width="10" height="6"><path d="M1 1L5 5L9 1" fill="none" stroke="#555" stroke-width="1.8"/></svg>
<div class="a" style="left:215px;top:84px;width:291px;height:586px;border:2px solid #5a5a5a;background:#fff"></div>
<div class="a" style="left:335.00px;top:84.00px;width:50.00px;height:13.00px;background:#666;border-radius:0 0 2px 2px;"></div>
<div class="a" style="left:340.00px;top:89.00px;width:40.00px;height:1.30px;background:#fff;"></div>
<div class="a" style="left:340.00px;top:93.00px;width:40.00px;height:1.30px;background:#fff;"></div>
<div class="t" style="left:226.40px;top:96.09px;font-size:21.78px;color:#606060;transform:scaleX(0.9157);transform-origin:0 0;">Map</div>
<div class="a" style="left:221px;top:131px;width:262.5px;height:516px;border:1px solid #e2e2e2"></div>
<svg style="left:0;top:0" width="1365" height="729"><defs><clipPath id="mc"><rect x="222" y="132" width="261" height="515"/></clipPath></defs><g clip-path="url(#mc)"><path d="M222.0 362.0 L224.2 360.4 L226.6 359.3 L228.0 357.8 L230.0 357.2 L231.2 355.4 L233.2 354.8 L234.7 353.5 L236.5 352.5 L238.9 351.6 L241.5 351.8 L244.0 351.5 L245.7 349.8 L248.0 349.1 L250.0 348.0 L251.4 346.4 L253.1 345.2 L255.1 344.5 L257.1 343.8 L258.3 341.8 L260.1 340.8 L262.0 340.0 L264.1 341.0 L266.1 342.3 L268.5 342.6 L270.7 343.2 L272.6 344.8 L275.0 345.0 L277.0 344.4 L279.0 345.6 L281.0 344.9 L283.0 344.8 L285.0 344.8 L287.0 345.2 L289.0 345.9 L291.0 345.1 L293.0 345.8 L295.0 345.9 L297.0 345.6 L299.0 345.9 L301.0 345.3 L303.0 346.0 L303.6 348.2 L303.4 350.5 L302.7 352.8 L303.0 355.0 L301.4 356.3 L299.8 357.7 L297.9 358.7 L296.3 360.1 L294.8 361.5 L292.7 362.2 L291.1 363.6 L289.8 365.4 L287.8 366.3 L286.2 367.6 L286.6 369.6 L286.5 371.7 L287.1 373.6 L288.1 375.4 L287.5 377.6 L289.1 379.3 L289.1 381.4 L289.4 383.4 L289.2 385.5 L290.2 387.6 L289.9 389.7 L290.8 391.7 L290.1 393.9 L290.1 396.0 L290.5 398.1 L290.3 400.2 L291.0 402.3 L291.0 404.6 L290.3 406.8 L290.2 409.1 L290.0 411.3 L289.9 413.6 L289.2 415.8 L289.4 418.1 L288.1 420.0 L288.0 422.3 L287.1 424.3 L287.2 426.7 L285.6 428.5 L285.0 430.6 L283.8 432.6 L283.4 434.8 L283.1 437.0 L281.2 437.7 L279.2 438.0 L277.1 438.0 L275.3 439.3 L273.2 439.1 L271.3 439.9 L269.4 440.3 L267.3 440.2 L265.6 441.6 L263.2 441.4 L261.6 443.0 L259.5 443.7 L257.5 444.3 L255.3 444.4 L253.7 446.3 L251.5 446.5 L249.7 447.9 L247.9 449.2 L245.8 450.1 L244.0 451.6 L242.2 452.9 L240.9 454.9 L238.9 456.0 L237.0 456.9 L235.0 457.8 L232.8 457.9 L230.8 458.6 L229.3 460.4 L227.3 461.1 L225.3 461.9 L223.2 462.3 L222.0 462.3 L221.6 460.3 L222.0 458.3 L222.1 456.3 L221.7 454.3 L221.3 452.3 L221.9 450.3 L221.8 448.3 L222.1 446.3 L222.6 444.2 L222.3 442.2 L222.0 440.2 L222.2 438.2 L222.2 436.2 L221.4 434.2 L222.6 432.2 L222.4 430.2 L222.5 428.2 L222.4 426.2 L221.8 424.2 L221.9 422.2 L221.4 420.2 L222.2 418.2 L221.4 416.2 L221.4 414.2 L221.6 412.1 L221.5 410.1 L221.8 408.1 L221.4 406.1 L221.3 404.1 L221.5 402.1 L221.4 400.1 L221.8 398.1 L221.3 396.1 L222.5 394.1 L222.2 392.1 L221.5 390.1 L221.7 388.1 L221.8 386.1 L221.8 384.1 L221.5 382.1 L222.5 380.1 L222.7 378.0 L222.0 376.0 L222.0 374.0 L221.4 372.0 L221.4 370.0 L221.8 368.0 L221.7 366.0 L222.5 364.0 Z" fill="#e6e6e6"/><path d="M229.3 342.8 L229.8 340.6 L230.6 338.6 L232.7 337.2 L233.1 335.0 L234.0 333.0 L235.1 330.8 L236.9 329.1 L237.8 326.8 L239.8 325.2 L242.0 324.6 L244.4 324.6 L246.5 323.8 L248.6 323.0 L250.6 321.8 L252.9 321.3 L255.1 320.9 L257.0 319.0 L259.7 318.3 L261.7 316.5 L263.3 317.9 L264.7 319.6 L266.8 320.4 L268.3 322.0 L270.6 322.3 L272.6 323.8 L275.0 324.0 L272.9 324.2 L271.1 325.3 L269.2 326.2 L267.4 327.0 L265.6 328.0 L264.0 329.5 L262.0 330.0 L260.2 331.4 L258.5 333.1 L257.0 334.9 L255.1 336.4 L252.9 337.3 L252.5 339.6 L251.8 341.8 L250.7 343.9 L248.8 345.1 L246.8 346.2 L245.4 348.2 L243.6 349.5 L241.2 348.4 L238.7 347.8 L236.0 348.0 L234.7 346.2 L232.5 345.5 L230.7 344.4 Z" fill="#e4e4e4"/><path d="M223.2 364.5 L225.4 365.2 L227.6 366.2 L229.5 367.6 L231.7 366.5 L234.2 366.0 L235.9 364.5 L237.7 363.2 L238.9 361.3 L240.2 363.2 L242.1 364.4 L243.7 366.0 L244.1 368.0 L244.6 369.9 L246.0 371.5 L246.0 373.7 L246.8 375.5 L249.0 375.2 L250.9 374.3 L252.8 373.5 L254.7 372.4 L256.3 374.0 L258.1 375.3 L259.2 377.4 L261.0 378.7 L262.8 377.7 L264.8 377.4 L266.7 376.8 L268.3 375.4 L270.1 374.6 L272.0 373.9 L274.4 373.3 L276.4 372.1 L278.4 370.8 L278.5 368.6 L279.0 366.5 L279.9 364.5" fill="none" stroke="#a0a0a0" stroke-width="0.65" stroke-linejoin="round"/><path d="M229.5 367.6 L230.1 369.4 L229.4 371.3 L229.8 373.0 L230.8 374.7 L230.2 376.6 L230.2 378.5 L231.0 380.2 L229.3 381.3 L228.0 382.9 L226.3 383.9 L225.0 385.6 L223.2 386.5" fill="none" stroke="#a0a0a0" stroke-width="0.65" stroke-linejoin="round"/><path d="M243.7 366.0 L242.4 364.4 L242.6 362.1 L241.5 360.4 L240.5 358.7 L240.2 356.6 L238.9 355.0" fill="none" stroke="#a0a0a0" stroke-width="0.65" stroke-linejoin="round"/><path d="M246.8 375.5 L247.1 377.3 L246.9 379.2 L247.2 381.1 L248.2 382.8 L248.4 384.6 L248.4 386.5 L247.5 388.2 L246.5 389.9 L245.2 391.3" fill="none" stroke="#a0a0a0" stroke-width="0.65" stroke-linejoin="round"/><path d="M261.0 378.7 L260.0 380.2 L259.4 382.0 L258.3 383.4 L257.6 385.2 L256.3 386.5 L256.4 388.8 L257.5 390.7 L257.9 392.9 L259.8 392.2 L261.7 391.7 L263.7 391.4 L265.4 390.2 L267.3 389.7 L268.3 387.7 L268.4 385.5 L268.9 383.4 L269.6 381.5 L270.2 379.6 L270.2 377.5 L271.3 375.8 L272.0 373.9" fill="none" stroke="#a0a0a0" stroke-width="0.65" stroke-linejoin="round"/><path d="M278.4 370.8 L279.1 372.7 L279.7 374.6 L279.2 376.8 L279.9 378.7 L282.1 378.8 L284.1 379.7 L286.2 380.2" fill="none" stroke="#a0a0a0" stroke-width="0.65" stroke-linejoin="round"/><path d="M223.2 402.3 L224.6 404.1 L226.3 405.5 L227.9 407.1 L229.8 406.9 L231.7 407.1 L233.6 407.2 L235.5 407.4 L237.4 407.1 L238.7 405.7 L240.6 405.2 L241.9 404.0 L243.5 403.0 L245.2 402.3 L245.3 404.3 L246.0 406.3 L246.3 408.2 L246.8 410.2 L249.0 409.4 L251.2 408.6 L253.1 407.1 L253.8 404.7 L254.7 402.3" fill="none" stroke="#a0a0a0" stroke-width="0.65" stroke-linejoin="round"/><path d="M237.4 407.1 L237.0 408.9 L236.9 410.8 L236.6 412.6 L236.1 414.4 L236.1 416.3 L235.8 418.1 L233.4 418.9 L231.0 419.7" fill="none" stroke="#a0a0a0" stroke-width="0.65" stroke-linejoin="round"/><path d="M253.1 407.1 L253.7 408.9 L253.7 410.9 L254.5 412.7 L254.8 414.6 L255.3 416.4 L256.3 418.1 L257.7 416.8 L259.5 416.0 L261.0 414.9 L263.3 414.3 L265.4 413.2 L267.3 411.8 L268.6 409.9 L270.5 408.6 L271.9 410.5 L272.6 412.8 L273.6 414.9 L275.7 414.4 L277.8 414.6 L279.9 414.9 L282.1 415.2 L283.8 416.7 L285.7 417.6 L287.8 418.1" fill="none" stroke="#a0a0a0" stroke-width="0.65" stroke-linejoin="round"/><path d="M273.6 402.3 L272.1 404.2 L271.9 406.7 L270.5 408.6" fill="none" stroke="#a0a0a0" stroke-width="0.65" stroke-linejoin="round"/><path d="M278.4 388.1 L277.9 389.9 L277.8 391.7 L278.1 393.6 L277.0 395.2 L276.7 397.0 L277.4 398.9 L276.8 400.7 L273.6 402.3" fill="none" stroke="#a0a0a0" stroke-width="0.65" stroke-linejoin="round"/><path d="M240.5 419.7 L239.2 421.5 L239.1 423.7 L238.2 425.6 L237.4 427.6 L237.9 429.5 L239.1 431.0 L240.5 432.3 L238.7 432.7 L236.8 432.4 L235.0 432.3 L233.2 432.5 L231.3 432.7 L229.5 432.3 L227.5 433.0 L225.2 433.1 L223.2 433.9" fill="none" stroke="#a0a0a0" stroke-width="0.65" stroke-linejoin="round"/><path d="M240.5 432.3 L242.1 434.1 L242.6 436.5 L243.7 438.6 L245.0 440.1 L246.7 441.4 L247.6 443.2 L248.6 445.0 L250.0 446.5" fill="none" stroke="#a0a0a0" stroke-width="0.65" stroke-linejoin="round"/><path d="M256.3 418.1 L256.7 419.9 L257.7 421.6 L257.1 423.6 L257.7 425.4 L258.0 427.2 L259.4 428.8 L259.4 430.7 L261.4 431.4 L263.4 432.1 L265.0 433.8 L267.1 434.2 L268.9 435.4 L268.6 433.4 L269.2 431.5 L269.9 429.7 L270.0 427.7 L269.5 425.8 L269.5 423.8 L270.6 422.0 L270.4 420.0 L270.5 418.1 L269.6 415.9 L267.9 414.1 L267.3 411.8" fill="none" stroke="#a0a0a0" stroke-width="0.65" stroke-linejoin="round"/><path d="M259.4 430.7 L257.6 432.0 L255.4 432.1 L253.5 433.2 L251.5 433.9 L250.2 435.3 L248.1 435.3 L246.7 436.6 L245.1 437.3 L243.7 438.6" fill="none" stroke="#a0a0a0" stroke-width="0.65" stroke-linejoin="round"/><path d="M279.9 414.9 L279.4 416.7 L277.7 417.9 L277.7 419.9 L275.9 421.0 L275.4 422.9 L274.7 424.5 L273.6 426.0 L272.9 427.9 L271.9 429.6 L272.0 431.7 L271.5 433.7 L270.5 435.4" fill="none" stroke="#a0a0a0" stroke-width="0.65" stroke-linejoin="round"/><path d="M245.2 391.3 L243.4 392.8 L241.9 394.7 L240.0 396.0 L241.7 397.3 L242.9 398.9 L244.3 400.4 L245.2 402.3" fill="none" stroke="#a0a0a0" stroke-width="0.65" stroke-linejoin="round"/><path d="M268.9 383.4 L271.0 384.0 L272.8 385.1 L274.7 386.0 L276.4 387.4 L278.4 388.1" fill="none" stroke="#a0a0a0" stroke-width="0.65" stroke-linejoin="round"/><path d="M261.7 328.5 L263.4 327.3 L265.2 326.5 L266.8 325.3 L268.7 324.4 L270.5 323.6 L272.2 322.8 L274.1 322.6 L275.9 322.0 L277.9 322.4 L279.7 321.8 L281.5 321.4 L283.4 321.2 L285.4 321.7 L287.2 322.3 L289.2 322.0 L290.4 323.5 L290.5 325.4 L291.7 326.8 L292.4 328.5 L293.3 330.3 L293.9 332.2 L295.1 333.7 L295.9 335.5 L296.8 337.3 L297.7 338.9 L298.6 340.5 L300.2 341.6 L300.9 343.4 L302.1 344.8 L303.4 346.1 L303.3 348.3 L303.5 350.5 L303.6 352.7 L303.4 354.9 L302.7 356.8 L301.5 358.4 L300.5 360.1 L299.0 361.5 L297.2 362.2 L295.6 363.5 L293.9 364.4 L292.2 365.4 L290.3 365.9 L288.1 365.8 L285.9 366.1 L283.7 366.6 L281.5 367.0 L279.7 366.1 L278.1 365.0 L276.4 363.9 L274.9 362.6 L272.7 362.4 L270.5 362.4 L268.3 361.8 L266.1 361.5 L264.4 362.4 L262.4 362.4 L260.7 363.0 L259.0 364.1 L257.3 364.8 L255.6 363.9 L254.4 362.2 L252.5 361.7 L250.9 360.5 L249.2 359.7 L247.8 358.3 L246.3 357.1 L245.4 354.9 L244.5 352.7 L243.6 350.5 L244.8 349.0 L246.4 347.9 L247.5 346.2 L249.1 345.0 L250.7 343.9 L251.0 341.6 L252.1 339.5 L252.9 337.3 L254.3 335.6 L255.9 334.2 L257.7 333.0 L259.5 331.8 L260.4 330.0 Z" fill="#eee3d6"/><path d="M313.9 180.4 L315.6 180.7 L317.3 180.8 L319.0 181.3 L320.7 181.3 L322.4 181.5 L324.1 181.3 L325.6 182.8 L327.9 183.0 L329.6 184.1 L331.4 183.4 L333.5 184.2 L335.1 182.3 L337.1 183.0 L338.9 182.2 L340.6 182.0 L341.9 180.5 L343.9 181.4 L345.6 181.0 L347.1 180.1 L348.8 179.8 L350.4 179.5 L351.9 178.5 L353.8 178.1 L355.6 179.0 L357.4 179.2 L359.3 179.4 L358.5 181.2 L358.4 183.1 L358.1 184.9 L358.3 186.8 L358.3 188.7 L356.6 189.6 L355.7 191.1 L354.5 192.5 L353.9 194.3 L353.0 195.9 L351.7 197.1 L350.0 198.0 L349.1 199.5 L348.4 201.1 L346.4 201.6 L345.7 203.2 L344.5 204.4 L343.5 205.7 L342.6 207.2 L341.0 208.4 L339.8 210.0 L339.0 212.0 L337.0 212.8 L337.5 214.8 L338.6 216.5 L340.0 218.0 L339.0 219.5 L337.9 221.0 L336.8 222.3 L336.0 224.0 L337.2 222.6 L339.2 223.1 L340.3 221.6 L341.7 220.6 L343.3 220.3 L345.0 220.0 L346.8 220.2 L348.4 219.1 L350.2 219.9 L351.9 219.3 L353.5 220.2 L355.2 219.5 L356.9 219.4 L358.5 219.6 L360.2 220.1 L361.8 220.3 L363.5 220.1 L365.2 220.3 L366.9 219.4 L368.5 220.2 L370.2 219.6 L371.8 219.8 L373.5 220.6 L375.2 219.8 L376.9 220.3 L378.5 219.3 L380.2 219.4 L381.9 219.8 L383.5 220.5 L385.2 220.2 L385.5 221.8 L386.2 223.3 L387.5 224.5 L387.8 226.1 L388.5 227.6 L387.9 229.2 L387.3 230.9 L387.2 232.7 L385.2 233.8 L385.8 235.9 L383.8 237.0 L383.2 238.7 L383.3 240.6 L383.4 242.6 L382.0 243.9 L380.7 245.2 L379.8 246.7 L379.9 248.7 L379.6 250.4 L379.0 252.1 L377.8 253.5 L376.2 254.3 L376.2 256.4 L374.8 257.4 L374.0 259.2 L374.2 261.3 L372.9 262.9 L372.3 264.8 L370.5 265.5 L370.3 267.7 L368.2 268.1 L367.4 269.7 L365.6 270.5 L364.9 272.2 L363.3 272.5 L362.1 273.9 L360.2 273.4 L359.0 274.8 L357.8 276.2 L356.0 276.0 L357.8 275.6 L359.2 276.9 L360.7 277.3 L362.4 277.5 L364.1 277.6 L365.5 278.4 L367.1 278.8 L368.6 279.6 L366.9 280.4 L366.8 282.7 L364.6 283.0 L363.3 284.1 L362.5 285.8 L360.6 286.9 L358.2 285.8 L356.3 287.0 L358.0 287.6 L359.7 288.2 L361.6 287.4 L363.3 287.8 L365.0 288.3 L366.8 288.7 L368.1 290.4 L370.0 290.3 L371.8 290.5 L373.5 291.2 L375.3 291.6 L377.1 291.8 L378.5 293.2 L380.4 294.1 L380.8 296.5 L382.6 297.5 L381.8 299.1 L379.9 299.7 L379.8 301.9 L378.7 303.2 L377.3 304.3 L376.6 306.0 L376.0 307.8 L377.2 309.1 L377.6 310.7 L378.1 312.3 L376.3 312.8 L375.0 314.0 L373.8 315.2 L372.8 316.7 L371.2 317.8 L369.5 318.7 L368.0 319.9 L367.1 321.7 L365.7 323.0 L364.2 324.1 L363.9 326.2 L361.8 326.7 L361.0 328.4 L359.4 329.4 L358.5 331.0 L356.6 331.7 L355.1 333.1 L353.2 333.7 L353.0 335.5 L351.4 336.4 L349.5 336.2 L348.2 338.1 L346.4 338.0 L344.8 338.7 L343.0 339.0 L341.2 339.6 L339.4 339.0 L337.5 338.7 L335.8 340.2 L334.0 340.0 L332.5 339.4 L330.7 339.6 L329.2 338.8 L327.6 338.7 L325.9 338.8 L324.3 338.4 L322.7 338.0 L321.4 336.4 L319.6 336.8 L318.0 336.4 L316.4 335.5 L316.1 333.4 L315.0 332.1 L313.1 331.5 L311.9 330.2 L312.3 328.3 L313.3 326.8 L314.0 325.2 L315.6 324.0 L316.4 322.4 L317.0 320.7 L318.3 319.4 L319.3 318.0 L320.8 316.9 L321.7 315.4 L322.7 313.7 L322.8 311.8 L322.5 309.8 L323.0 308.0 L321.6 306.9 L320.5 305.5 L319.1 304.5 L318.0 303.1 L316.4 302.3 L314.6 301.8 L313.3 300.4 L312.6 298.4 L310.6 298.1 L309.1 297.0 L308.6 295.1 L307.9 293.5 L307.2 291.8 L305.7 290.7 L306.0 292.5 L305.6 294.2 L305.4 296.0 L304.9 297.6 L304.5 299.4 L303.4 301.0 L303.3 302.7 L303.0 304.4 L304.3 306.4 L303.2 308.0 L303.0 309.9 L301.1 310.7 L299.9 311.9 L299.7 313.7 L298.6 315.1 L298.7 317.0 L297.0 318.0 L296.6 316.4 L297.4 314.7 L297.0 313.1 L296.9 311.4 L296.9 309.8 L295.4 308.3 L295.0 306.7 L295.5 305.0 L294.9 303.3 L295.6 301.7 L295.9 300.0 L296.4 298.3 L296.0 296.7 L295.9 295.0 L296.2 293.3 L295.6 291.7 L295.8 290.0 L294.9 288.3 L296.3 286.7 L295.8 285.0 L294.5 283.8 L294.7 281.7 L293.4 280.5 L292.0 279.3 L290.8 278.0 L290.1 276.4 L289.6 274.7 L287.7 275.1 L285.8 275.6 L284.3 277.2 L282.2 277.2 L282.1 275.4 L283.4 274.2 L284.1 272.7 L284.4 271.0 L284.7 269.4 L286.0 268.1 L285.6 266.2 L287.0 265.0 L287.6 263.3 L288.8 262.0 L290.5 260.9 L290.7 259.0 L291.7 257.6 L292.8 256.3 L292.9 254.5 L293.2 252.8 L294.4 251.5 L295.3 249.7 L297.5 249.0 L298.4 247.2 L299.4 245.4 L298.3 243.9 L297.0 242.5 L296.9 240.4 L297.6 238.9 L298.7 237.6 L299.0 235.9 L299.5 234.3 L300.6 233.0 L299.6 231.3 L298.7 229.5 L296.5 228.7 L295.7 226.9 L294.9 225.2 L295.4 223.4 L295.6 221.7 L296.0 219.9 L295.7 218.2 L295.8 216.2 L297.4 214.7 L297.9 212.8 L298.1 210.8 L299.3 209.6 L300.2 207.9 L302.4 207.7 L302.8 205.6 L304.3 204.6 L305.5 202.9 L305.1 200.7 L305.7 198.9 L306.8 197.2 L308.1 196.0 L308.3 194.2 L310.1 193.4 L310.3 191.5 L310.8 189.8 L311.7 188.4 L313.0 187.3 L313.1 185.6 L313.7 183.9 L314.5 182.2 Z" fill="#eedcdd"/><path d="M287.0 184.9 L287.7 186.6 L287.6 188.3 L288.1 190.0 L287.5 191.9 L288.3 193.5 L287.9 195.2 L287.3 196.7 L286.6 198.2 L285.5 199.5 L284.6 200.9 L283.2 201.8 L282.2 203.1 L281.4 204.4 L280.1 205.5 L279.6 207.1 L278.2 208.0 L277.8 209.7 L277.0 211.1 L275.3 211.7 L274.7 213.3 L273.0 214.0 L271.9 215.6 L269.9 215.9 L268.5 217.0 L267.5 215.8 L266.5 214.6 L265.6 213.4 L264.8 212.0 L265.1 210.3 L265.5 208.7 L266.4 207.3 L267.3 205.9 L266.9 204.5 L267.3 202.8 L266.1 201.5 L266.8 199.9 L266.0 198.5 L267.4 197.3 L269.0 196.5 L270.8 196.1 L272.2 194.8 L273.7 194.2 L274.6 193.0 L275.6 191.7 L277.2 191.2 L278.3 190.2 L279.9 189.9 L280.9 188.6 L282.2 187.4 L283.9 186.6 L285.7 186.2 Z" fill="#eedcdd"/><path d="M264.8 219.4 L265.6 220.8 L265.4 222.4 L265.2 224.0 L265.4 225.5 L266.0 226.9 L266.1 228.7 L265.7 230.3 L265.3 231.9 L263.9 233.3 L264.3 235.1 L263.6 236.7 L263.0 238.4 L262.6 240.1 L263.0 241.9 L262.8 243.7 L262.3 245.4 L260.7 246.2 L259.7 247.8 L258.6 249.1 L258.1 250.7 L256.9 251.9 L256.6 253.6 L255.9 255.1 L254.9 256.5 L254.7 254.7 L256.0 253.3 L256.6 251.7 L256.7 249.9 L257.5 248.4 L257.4 246.6 L257.3 244.8 L257.9 243.2 L258.6 241.6 L259.6 240.1 L260.0 238.5 L259.9 236.7 L259.5 235.2 L259.1 233.8 L259.1 232.3 L258.9 230.8 L259.2 229.2 L258.0 227.9 L258.5 226.3 L258.2 224.8 L258.0 223.3 L257.4 221.9 L259.0 221.7 L260.4 221.0 L261.8 220.2 L263.3 219.7 Z" fill="#eedcdd"/><path d="M284.6 219.4 L285.9 220.3 L286.8 221.7 L288.6 222.0 L289.7 223.1 L290.7 224.4 L290.7 225.9 L291.5 227.3 L292.0 228.7 L292.3 230.2 L292.0 231.8 L293.2 233.1 L294.6 234.1 L295.2 235.9 L296.6 237.1 L298.1 238.0 L296.5 238.5 L295.8 240.2 L294.8 241.3 L293.5 242.3 L292.0 242.9 L290.5 243.8 L288.8 244.5 L287.4 245.7 L285.8 246.6 L284.8 245.3 L284.2 243.7 L283.7 242.1 L283.0 240.6 L282.1 239.2 L281.3 237.8 L280.4 236.5 L279.2 235.4 L277.6 234.6 L277.2 232.8 L275.9 231.8 L275.9 230.3 L276.5 228.9 L276.5 227.3 L277.2 225.9 L277.2 224.4 L278.5 223.1 L280.0 222.1 L281.5 221.1 L282.9 220.1 Z" fill="#eedcdd"/><path d="M282.0 248.0 L283.5 248.5 L285.0 248.0 L284.9 249.5 L285.0 251.0 L283.5 251.2 L282.0 251.0 L281.9 249.5 Z" fill="#eedcdd"/><path d="M287.0 252.0 L288.5 252.6 L290.0 252.0 L290.0 253.5 L290.0 255.0 L288.5 255.3 L287.0 255.0 L287.4 253.5 Z" fill="#eedcdd"/><path d="M280.0 257.0 L281.7 256.8 L283.4 256.9 L284.9 255.5 L286.7 255.6 L288.4 255.7 L290.0 255.0 L290.1 256.6 L290.5 258.2 L292.0 259.3 L292.2 260.9 L292.9 262.4 L293.0 264.0 L291.9 265.1 L290.0 265.2 L288.9 266.4 L287.4 266.9 L286.4 268.3 L285.0 269.0 L283.7 267.9 L282.0 267.6 L280.4 267.0 L279.0 266.0 L279.5 264.5 L279.9 263.1 L279.0 261.4 L279.8 260.0 L280.0 258.5 Z" fill="#eedcdd"/><path d="M281.0 293.0 L281.9 291.7 L283.2 290.9 L284.2 289.7 L285.4 288.7 L286.6 287.8 L288.0 287.0 L288.7 288.6 L289.5 290.1 L290.8 291.3 L291.8 292.7 L292.3 294.4 L293.0 296.0 L292.5 297.6 L292.7 299.4 L292.2 301.0 L292.0 302.7 L291.0 304.3 L291.0 306.0 L289.2 305.9 L287.5 306.5 L285.8 306.5 L284.0 306.0 L283.5 304.4 L283.3 302.7 L283.0 301.1 L282.0 299.6 L281.7 298.0 L282.0 296.2 L281.3 294.6 Z" fill="#eedcdd"/><path d="M306.0 302.0 L307.5 302.0 L309.0 302.3 L310.4 303.3 L312.0 303.0 L312.4 304.5 L312.3 306.0 L312.7 307.5 L312.8 309.0 L312.4 310.5 L313.0 312.0 L311.4 311.7 L310.0 312.7 L308.6 313.1 L307.0 313.0 L307.1 311.4 L306.4 309.9 L306.0 308.3 L306.9 306.7 L306.2 305.2 L306.5 303.5 Z" fill="#eedcdd"/><path d="M350.4 160.0 L351.7 158.8 L353.5 158.2 L354.6 156.7 L356.0 155.6 L357.8 155.8 L359.5 156.3 L361.0 157.5 L362.7 158.0 L362.6 159.7 L362.3 161.3 L363.3 163.0 L362.8 164.7 L363.1 166.3 L363.0 168.0 L362.0 169.4 L361.3 171.0 L360.2 172.2 L359.0 173.4 L358.0 174.8 L356.8 173.6 L355.0 173.7 L353.8 172.5 L352.6 171.4 L351.0 171.0 L351.0 169.3 L349.7 168.1 L349.1 166.6 L349.0 165.0 L350.0 163.5 L350.5 161.8 Z" fill="#eedcdd"/><path d="M358.6 150.0 L359.9 149.0 L361.0 147.6 L363.0 147.4 L364.0 146.0 L365.5 146.4 L366.8 147.5 L368.5 147.6 L370.0 148.0 L370.8 149.5 L372.5 150.2 L373.0 152.0 L374.4 153.0 L373.8 154.5 L372.7 155.8 L371.3 156.8 L370.4 158.1 L370.1 159.9 L369.2 161.2 L368.0 162.4 L366.5 161.9 L365.0 161.2 L363.4 160.7 L362.0 160.0 L361.1 158.7 L360.7 157.2 L360.8 155.6 L360.5 154.1 L359.1 153.0 L359.2 151.4 Z" fill="#eedcdd"/><path d="M390.5 137.5 L393.0 137.5 L392.7 139.2 L393.0 141.0 L390.5 141.0 L389.9 139.2 Z" fill="#eedcdd"/><path d="M322.0 396.5 L323.7 395.4 L324.4 393.4 L326.1 392.3 L328.3 392.9 L330.6 393.3 L332.9 393.7 L334.2 395.8 L335.7 397.8 L337.5 396.9 L339.3 396.4 L341.2 395.8 L343.0 395.7 L344.8 395.2 L346.7 395.3 L348.5 394.8 L350.3 394.6 L352.1 394.4 L354.2 394.2 L356.2 395.1 L357.0 397.0 L358.1 398.8 L359.0 400.6 L360.1 402.1 L360.4 404.0 L361.2 405.7 L362.3 407.1 L363.1 408.8 L365.8 410.2 L364.1 411.1 L362.2 411.3 L360.6 412.3 L358.8 412.8 L356.9 412.9 L356.3 415.0 L355.6 417.0 L356.9 418.9 L357.4 421.1 L358.1 423.2 L359.0 425.3 L357.8 427.1 L355.7 427.9 L354.2 429.4 L356.1 430.1 L357.2 431.9 L359.0 432.8 L358.0 435.1 L357.6 437.6 L358.1 439.4 L359.1 441.1 L359.0 443.1 L359.6 444.9 L359.4 446.9 L360.4 448.6 L362.3 448.9 L363.6 450.3 L365.3 451.2 L367.2 451.3 L367.1 453.4 L367.2 455.5 L368.1 457.5 L367.9 459.6 L366.4 460.9 L365.8 462.8 L364.3 464.1 L363.3 465.7 L363.1 467.8 L361.7 469.2 L359.4 468.9 L357.2 468.7 L354.9 469.2 L352.9 469.4 L351.0 468.8 L349.2 468.1 L347.2 468.5 L345.3 467.8 L343.6 466.5 L341.4 466.4 L339.7 465.0 L337.5 464.9 L335.7 463.7 L334.0 462.9 L332.6 461.6 L330.6 461.6 L328.9 460.7 L327.4 459.6 L325.6 459.4 L323.7 459.3 L321.9 459.5 L320.1 459.0 L318.3 458.8 L316.5 458.2 L314.9 456.8 L312.9 456.2 L311.0 455.5 L310.0 453.4 L307.9 452.1 L306.9 450.0 L308.8 449.3 L310.1 447.6 L312.0 447.0 L313.7 445.9 L315.5 445.0 L317.1 443.7 L319.1 443.1 L320.6 441.7 L322.2 440.8 L323.8 439.8 L325.6 439.2 L326.6 437.4 L328.8 437.3 L330.1 436.0 L331.6 434.9 L332.0 432.9 L333.0 431.2 L332.9 429.1 L334.3 427.4 L334.3 425.3 L334.7 423.4 L334.7 421.4 L335.5 419.6 L335.4 417.6 L335.7 415.7 L333.6 416.1 L331.5 415.4 L329.5 416.2 L327.4 415.7 L325.1 415.3 L322.9 416.0 L320.6 415.7 L321.6 413.9 L322.9 412.3 L323.3 410.2 L325.0 409.2 L326.7 408.2 L328.2 406.7 L329.6 405.3 L331.6 404.7 L332.5 402.9 L334.3 401.9 L332.1 401.7 L330.2 400.6 L328.5 399.8 L326.7 399.3 L325.0 398.5 L323.3 397.8 Z" fill="#e1e7e4"/><path d="M463.9 483.0 L466.0 483.1 L467.8 481.7 L469.9 481.4 L472.0 481.6 L473.8 480.3 L475.8 479.9 L477.9 480.0 L479.9 479.3 L482.0 479.2 L484.0 479.0 L484.4 481.0 L483.9 483.0 L483.9 485.0 L484.4 487.0 L483.8 489.1 L484.0 491.1 L484.5 493.1 L483.4 495.1 L484.4 497.1 L484.5 499.1 L484.6 501.1 L483.8 503.1 L483.5 505.2 L483.6 507.2 L484.1 509.2 L484.3 511.2 L484.7 513.2 L483.8 515.2 L483.9 517.2 L484.2 519.2 L483.8 521.2 L484.1 523.3 L483.4 525.3 L483.7 527.3 L484.4 529.3 L483.4 531.3 L484.6 533.3 L484.0 535.3 L484.1 537.3 L484.4 539.4 L484.6 541.4 L483.6 543.4 L484.7 545.4 L483.9 547.4 L483.4 549.4 L484.5 551.4 L484.4 553.4 L483.8 555.5 L484.0 557.5 L483.8 559.5 L483.6 561.5 L484.5 563.5 L484.3 565.5 L484.3 567.5 L484.6 569.5 L483.5 571.5 L483.6 573.6 L483.7 575.6 L484.7 577.6 L483.5 579.6 L483.7 581.6 L484.0 583.6 L483.7 585.6 L484.1 587.6 L484.4 589.7 L484.6 591.7 L484.4 593.7 L484.6 595.7 L484.2 597.7 L483.7 599.7 L483.7 601.7 L483.5 603.7 L483.7 605.8 L484.3 607.8 L483.9 609.8 L484.1 611.8 L483.6 613.8 L484.0 615.8 L484.3 617.8 L483.8 619.8 L483.3 621.8 L484.4 623.9 L483.5 625.9 L484.7 627.9 L484.3 629.9 L484.4 631.9 L483.7 633.9 L483.4 635.9 L483.7 637.9 L484.2 640.0 L483.5 642.0 L484.2 644.0 L484.4 646.0 L484.0 648.0 L482.0 647.4 L480.0 647.8 L477.9 647.7 L475.9 647.8 L473.9 647.3 L471.9 648.0 L469.9 647.5 L467.9 647.7 L465.8 647.5 L463.8 648.1 L461.8 647.7 L459.8 647.9 L457.8 648.3 L455.7 648.4 L453.7 647.8 L451.7 648.6 L449.7 647.4 L447.7 648.5 L445.6 648.7 L443.6 648.6 L441.6 647.4 L439.6 648.2 L437.6 648.5 L435.6 648.7 L433.5 648.6 L431.5 647.7 L429.5 647.8 L427.5 647.7 L425.5 647.7 L423.4 648.6 L421.4 647.9 L419.4 648.2 L417.4 647.6 L415.4 647.6 L413.3 647.5 L411.3 648.6 L409.3 647.5 L407.3 647.4 L405.3 647.4 L403.2 648.6 L401.2 648.4 L399.2 648.5 L397.2 648.7 L395.2 647.5 L393.2 647.6 L391.1 647.8 L389.1 647.5 L387.1 648.0 L386.9 646.0 L386.0 644.1 L385.4 642.1 L384.9 640.1 L385.5 638.0 L384.3 636.1 L384.1 634.1 L383.8 632.1 L382.8 630.2 L382.8 628.2 L382.7 626.1 L381.7 624.0 L381.5 621.6 L380.3 619.6 L379.5 617.4 L379.6 614.9 L378.3 612.9 L376.7 611.5 L375.3 609.8 L373.5 608.7 L371.3 608.0 L370.0 606.2 L368.3 604.8 L367.0 603.1 L365.1 602.0 L363.1 601.2 L361.5 599.9 L359.5 599.1 L357.4 598.6 L355.9 596.8 L353.5 596.9 L351.9 595.4 L350.3 593.9 L348.1 593.6 L346.2 592.8 L344.5 591.5 L343.2 589.7 L341.5 588.4 L339.0 588.5 L337.6 586.8 L335.7 585.9 L333.8 584.9 L332.1 583.6 L329.8 583.4 L328.1 582.1 L326.1 581.3 L324.5 579.8 L322.3 579.5 L320.5 578.3 L321.0 576.1 L319.9 574.1 L319.6 572.0 L320.1 569.8 L319.7 567.7 L321.7 567.2 L323.6 566.2 L325.7 566.5 L327.5 565.3 L329.7 565.8 L331.7 565.2 L333.7 564.8 L335.7 564.1 L337.6 563.5 L341.0 563.5 L343.0 563.0 L345.0 562.8 L347.0 562.5 L349.0 562.8 L350.9 561.4 L353.0 562.2 L354.8 560.7 L356.9 560.7 L358.9 560.5 L361.0 561.1 L362.9 560.2 L364.7 561.1 L366.6 561.9 L368.2 563.4 L370.4 563.5 L372.1 564.7 L373.9 565.7 L375.9 565.4 L377.9 565.4 L379.9 565.1 L381.9 564.6 L383.8 563.8 L385.7 563.5 L387.7 562.9 L389.8 563.5 L391.8 563.0 L393.7 562.4 L393.4 560.1 L392.0 558.2 L391.7 555.9 L391.6 553.6 L390.7 551.4 L389.4 549.4 L389.3 547.1 L389.0 545.0 L389.3 542.9 L388.1 541.0 L387.8 538.9 L387.6 536.8 L387.9 534.7 L387.9 532.6 L387.1 530.6 L389.2 529.9 L391.4 529.7 L393.6 529.6 L395.8 529.5 L398.0 529.5 L399.1 531.7 L400.6 533.7 L401.5 536.0 L402.4 538.3 L404.5 538.3 L406.2 539.8 L408.3 539.9 L410.4 539.5 L412.2 541.1 L414.4 540.4 L416.3 541.2 L418.1 542.5 L420.1 542.7 L422.2 542.7 L424.1 541.9 L425.7 540.4 L427.3 539.0 L429.3 538.5 L431.0 537.2 L431.0 535.1 L431.7 533.2 L432.5 531.4 L433.2 529.5 L434.7 527.8 L436.8 527.2 L438.9 526.5 L440.6 525.3 L442.3 524.0 L444.1 522.9 L446.1 522.2 L447.9 521.2 L449.7 520.0 L451.9 519.7 L453.7 518.7 L455.8 518.3 L457.8 517.7 L459.5 516.3 L460.5 514.5 L461.8 512.9 L463.1 511.3 L463.8 509.3 L465.0 507.6 L464.5 505.4 L465.0 503.2 L465.1 501.0 L464.8 498.8 L464.6 496.6 L464.7 494.4 L464.3 492.2 L463.9 490.0 L464.1 487.7 L463.8 485.3 Z" fill="#e8e8e8"/><path d="M393.7 565.7 L395.6 566.2 L397.3 567.3 L399.3 567.5 L401.0 568.5 L402.7 569.7 L404.6 570.1 L406.6 570.2 L408.5 570.0 L410.4 569.4 L412.4 569.5 L414.4 569.4 L416.3 569.5 L418.3 569.1 L420.3 569.3 L422.2 569.0 L423.9 570.1 L426.1 569.9 L427.8 571.1 L429.6 571.8 L431.7 572.0 L433.5 572.8 L435.4 573.4 L436.7 574.8 L438.8 574.8 L440.0 576.3 L441.8 576.8 L443.0 578.4 L444.5 579.5 L446.3 580.0 L446.6 578.1 L446.4 576.1 L447.2 574.2 L447.4 572.3 L447.9 570.4 L448.0 568.5 L448.4 566.5 L448.5 564.6 L450.4 563.8 L451.8 562.4 L453.4 561.2 L455.4 560.6 L456.6 558.8 L458.5 558.2 L460.0 556.8 L461.7 555.8 L462.7 554.1 L462.7 552.0 L464.4 550.6 L464.5 548.5 L464.9 546.5 L466.1 544.9 L466.1 542.9 L466.5 541.0 L466.3 539.0 L467.0 537.1 L467.2 535.1 L467.8 533.2 L467.6 531.2 L467.8 529.2 L468.3 527.3 L467.3 525.6 L467.1 523.5 L466.6 521.6 L465.4 520.0 L464.3 518.3 L463.9 516.3" fill="none" stroke="#a0a0a0" stroke-width="0.65" stroke-linejoin="round"/><path d="M461.7 555.8 L462.3 557.7 L463.6 559.3 L464.6 560.9 L465.6 562.6 L465.8 564.7 L466.6 566.5 L467.7 568.2 L468.8 569.9 L469.6 571.7 L470.5 573.4 L472.4 573.6 L473.9 574.9 L475.9 574.6 L477.6 575.4 L479.3 576.1 L481.1 576.6 L483.0 576.7" fill="none" stroke="#a0a0a0" stroke-width="0.65" stroke-linejoin="round"/><path d="M467.2 544.9 L469.2 545.1 L471.2 545.2 L473.1 545.8 L475.2 545.6 L477.0 546.7 L479.1 546.4 L481.0 547.2 L483.0 547.1" fill="none" stroke="#a0a0a0" stroke-width="0.65" stroke-linejoin="round"/><path d="M404.6 570.1 L405.0 571.9 L405.0 573.8 L405.3 575.6 L405.2 577.4 L405.6 579.2 L405.9 581.1 L405.2 583.0 L405.8 584.7 L405.7 586.6 L404.5 588.1 L403.0 589.3 L401.5 590.4 L400.1 591.7 L398.5 592.8 L397.1 594.0 L395.8 595.4 L394.2 596.4 L392.2 596.6 L390.6 597.5 L389.3 599.2 L387.2 599.2 L385.5 600.0 L383.9 601.0 L382.5 602.5 L380.5 602.6 L378.9 603.6 L377.5 605.1 L375.8 606.0 L373.9 606.3" fill="none" stroke="#a0a0a0" stroke-width="0.65" stroke-linejoin="round"/><path d="M446.3 580.0 L445.2 581.6 L444.9 583.5 L444.8 585.5 L444.4 587.3 L443.7 589.1 L443.0 590.8 L441.8 592.4 L441.7 594.4 L441.3 596.3 L439.8 597.8 L439.7 599.7 L438.4 601.2 L438.1 603.3 L436.4 604.6 L435.7 606.5 L434.6 608.1 L433.7 609.9 L432.5 611.4 L431.7 613.2 L431.0 615.1 L429.0 615.3 L427.4 616.5 L425.4 616.5 L423.7 617.3 L421.7 617.6 L420.0 618.5 L418.0 618.5 L416.3 619.4 L414.6 620.3 L412.8 620.9 L411.0 621.6 L409.0 621.7 L409.6 623.5 L410.6 625.2 L410.7 627.2 L411.6 628.9 L411.8 630.8 L412.3 632.6 L412.8 634.5 L413.0 636.4 L414.5 638.0 L414.1 640.1 L415.1 641.8 L415.6 643.6 L413.8 643.9 L411.9 644.2 L410.0 644.4 L408.3 645.3 L406.5 645.7 L404.6 646.0" fill="none" stroke="#a0a0a0" stroke-width="0.65" stroke-linejoin="round"/><path d="M431.0 615.1 L432.3 616.7 L434.6 616.9 L435.8 618.5 L437.5 619.6 L439.5 620.1 L440.8 621.8 L442.3 623.0 L444.1 623.9 L444.8 625.7 L446.5 626.9 L446.9 628.9 L448.5 630.1 L449.6 631.6 L450.3 633.4 L452.3 634.4 L452.7 636.4 L453.9 637.8 L455.1 639.3 L457.0 639.1 L458.8 639.7 L460.7 639.1 L462.5 639.3 L464.4 639.3 L466.3 639.6 L468.1 639.0 L470.0 639.2 L471.8 639.2 L473.7 639.4 L475.6 639.7 L477.4 639.1 L479.3 639.7 L481.1 639.2 L483.0 639.3" fill="none" stroke="#a0a0a0" stroke-width="0.65" stroke-linejoin="round"/><path d="M382.6 297.5 L383.9 299.0 L385.5 300.3 L386.6 301.9 L388.0 303.4 L389.1 305.2 L390.8 306.4 L392.4 307.8 L392.3 309.6 L393.0 311.4 L393.3 313.2 L393.3 315.0 L393.8 316.6 L393.8 318.3 L394.1 319.9 L394.2 321.6 L395.3 323.1 L395.1 324.8 L395.6 326.5 L396.2 328.2 L397.2 329.6 L398.4 331.0 L398.7 332.8 L399.5 334.4 L400.3 335.9 L400.7 337.6 L400.6 339.5 L401.5 341.0 L402.2 342.6 L403.7 343.8 L405.2 345.0 L406.7 346.2 L408.5 347.0 L410.2 348.0 L412.0 348.9 L413.8 349.8 L415.6 350.6 L416.3 352.1 L417.3 353.4 L418.1 354.8 L419.4 355.8 L420.0 357.4 L421.0 358.7 L422.3 360.1 L423.3 361.7 L425.0 362.7 L426.2 364.2 L427.2 365.8 L427.0 367.7 L425.7 369.2 L425.4 371.1 L425.9 372.9 L427.1 374.4 L428.2 375.9 L428.7 377.7 L429.9 379.2 L430.5 381.1 L431.6 382.8 L432.5 384.5 L433.3 386.0 L433.8 387.6 L434.2 389.3 L434.8 390.8 L435.2 392.5 L435.8 394.1 L436.1 395.8 L436.4 397.5 L437.8 398.8 L437.9 400.6 L437.4 402.4 L437.4 404.3 L436.9 406.0 L436.1 407.7 L434.7 409.0 L433.6 410.6 L432.5 412.1 L434.0 413.9 L436.0 415.0 L437.5 413.1 L439.0 411.3 L440.3 410.0 L441.9 409.5 L443.5 408.7 L445.2 408.9 L446.9 409.5 L448.6 409.7 L450.4 409.3 L452.2 409.4 L453.9 409.2 L455.6 409.8 L457.0 410.8 L458.7 411.3 L460.3 412.1 L461.8 412.8 L463.3 413.7 L464.6 415.0 L465.4 416.6 L466.8 417.8 L467.0 419.8 L468.6 420.9 L469.2 422.6 L468.6 424.5 L469.2 426.4 L469.1 428.4 L468.4 430.2 L467.7 431.9 L467.7 433.9 L466.8 435.5 L466.9 437.5 L466.1 439.2 L465.5 440.8 L464.0 441.7 L463.1 443.1 L462.1 444.3 L461.2 445.7 L460.8 447.4 L459.4 448.4 L458.6 449.8 L457.2 450.9 L456.1 452.3 L454.5 453.2 L453.7 455.0 L451.9 455.7 L451.0 457.3 L450.1 458.7 L449.9 460.5 L449.2 462.0 L448.0 463.3 L446.1 463.6 L444.2 463.8 L442.5 464.9 L440.5 464.9 L442.1 465.5 L443.4 466.6 L445.1 466.9 L446.5 467.9 L448.3 468.3 L450.0 468.0 L451.8 467.7 L453.6 468.1 L455.3 468.4 L457.1 468.3 L458.9 468.6 L460.6 468.2 L462.4 468.6 L461.8 470.2 L461.9 471.9 L461.4 473.6 L461.1 475.2 L460.9 476.9 L459.3 477.9 L457.6 478.8 L455.8 479.3 L454.0 480.1 L452.6 481.4 L451.0 481.9 L449.5 482.9 L448.2 483.9 L446.7 484.8 L444.8 484.8 L443.4 485.8 L441.9 486.4 L440.5 487.5 L439.1 488.8 L437.4 489.7 L435.7 490.5 L434.5 492.0 L432.8 491.3 L431.1 491.2 L429.3 491.2 L427.6 490.8 L425.9 490.0 L424.1 490.1 L422.4 489.7 L420.6 489.8 L418.9 490.3 L417.1 490.3 L415.4 490.7 L413.8 491.6 L412.1 492.2 L410.3 492.0 L408.2 491.7 L406.3 491.1 L404.3 490.5 L403.5 492.0 L402.5 493.4 L401.7 494.8 L401.3 496.5 L399.1 497.4 L396.8 497.3 L395.5 495.8 L393.9 494.5 L392.2 493.5 L390.2 493.1 L388.2 493.4 L386.2 493.5 L384.8 494.3 L383.1 494.3 L381.6 494.9 L380.2 495.8 L378.4 496.6 L376.6 497.3 L375.2 498.7 L373.4 499.5 L371.8 498.8 L370.7 497.5 L369.4 496.3 L367.7 495.7 L366.6 494.3 L365.1 493.5 L362.6 492.7 L360.6 492.6 L358.8 493.6 L356.9 493.6 L355.2 494.2 L353.4 494.9 L351.8 495.8 L350.1 496.5 L350.2 498.3 L350.0 500.0 L349.3 501.6 L349.1 503.3 L349.2 505.1 L348.3 506.9 L347.6 508.8 L346.3 510.4 L344.4 510.0 L342.5 509.9 L340.5 510.0 L339.0 509.2 L337.9 508.0 L336.7 506.7 L335.4 505.8 L333.8 505.1 L331.9 505.4 L329.9 505.8 L328.0 506.1 L326.1 506.5 L324.2 507.4 L322.3 507.8 L320.3 508.0 L319.4 509.4 L317.9 510.2 L317.0 511.6 L315.7 512.6 L314.6 513.8 L314.2 515.7 L313.6 517.6 L311.7 518.6 L309.8 519.6 L308.6 518.3 L307.9 516.7 L306.1 516.5 L304.9 515.0 L303.1 514.8 L301.7 515.7 L300.4 516.7 L298.7 517.2 L298.6 515.0 L298.3 512.8 L300.4 511.6 L302.1 510.0 L303.6 509.3 L305.3 509.4 L306.9 509.0 L307.9 507.6 L309.2 506.3 L310.0 504.7 L311.2 503.3 L312.7 502.3 L313.6 500.5 L313.6 498.4 L315.3 497.8 L316.5 496.5 L318.0 495.6 L319.4 494.6 L320.5 493.0 L322.3 491.9 L323.3 490.2 L324.7 488.8 L325.4 486.9 L325.4 485.0 L325.7 483.1 L325.6 481.1 L327.7 482.1 L330.0 482.1 L330.5 480.1 L331.4 478.3 L331.7 476.2 L332.8 474.4 L334.4 473.9 L336.0 473.6 L337.5 473.3 L339.1 473.0 L340.8 473.3 L342.4 473.0 L344.1 473.7 L345.9 473.6 L347.6 474.4 L349.4 474.7 L351.3 474.2 L353.0 474.9 L355.1 474.7 L357.2 474.1 L359.3 473.9 L359.4 472.1 L360.6 470.6 L360.3 468.7 L361.0 467.0 L362.4 465.8 L363.8 464.6 L365.0 463.3 L366.1 461.6 L366.4 459.8 L366.8 457.9 L367.4 456.1 L368.1 454.3 L367.0 453.0 L366.6 451.3 L365.4 449.9 L363.9 448.9 L362.1 448.3 L360.6 446.9 L359.2 445.5 L358.3 443.7 L357.7 441.9 L357.4 440.0 L357.6 438.0 L356.8 436.2 L357.9 434.9 L358.6 433.3 L359.0 431.7 L357.4 430.5 L356.8 428.5 L355.3 427.1 L356.2 425.7 L356.9 424.2 L358.0 422.8 L358.3 421.1 L357.3 419.8 L356.8 418.2 L356.8 416.5 L356.0 415.1 L357.1 413.6 L357.5 411.8 L358.0 410.0 L359.6 409.5 L361.4 409.4 L363.0 409.0 L362.4 407.2 L361.0 405.8 L360.4 404.0 L359.6 402.4 L359.0 400.6 L360.1 399.4 L361.7 398.7 L362.8 397.5 L364.2 396.7 L365.5 395.6 L367.0 395.0 L365.3 395.2 L363.8 396.1 L362.0 396.0 L360.5 395.2 L358.7 395.1 L357.0 394.7 L355.6 393.7 L356.5 392.2 L356.3 390.4 L357.5 389.0 L357.6 387.2 L358.3 385.2 L358.6 383.1 L358.5 380.9 L358.4 379.1 L358.9 377.3 L358.8 375.5 L359.4 373.8 L361.1 372.3 L362.1 370.2 L362.8 368.7 L362.9 367.0 L363.1 365.4 L363.4 363.8 L363.9 362.2 L362.3 363.3 L361.2 364.9 L359.7 365.4 L358.1 365.7 L356.6 366.6 L355.0 366.7 L353.9 365.2 L352.8 363.6 L352.5 361.7 L351.4 360.1 L350.2 358.7 L349.6 356.9 L349.2 355.1 L347.9 353.8 L347.4 352.1 L346.4 350.6 L346.0 348.8 L346.4 347.2 L347.5 346.0 L347.6 344.3 L348.1 342.7 L349.0 341.4 L349.6 339.9 L350.3 338.3 L351.7 337.0 L352.0 335.1 L353.2 333.7 L355.2 333.2 L356.5 331.5 L358.5 331.0 L360.0 329.9 L361.0 328.4 L361.9 326.8 L363.3 325.7 L364.3 324.2 L365.7 323.0 L367.0 321.6 L368.3 320.3 L369.9 319.1 L371.7 318.3 L372.8 316.7 L374.4 316.0 L375.7 314.8 L376.5 313.1 L378.1 312.3 L377.2 310.9 L377.1 309.1 L376.0 307.8 L376.2 305.9 L377.3 304.3 L378.5 303.1 L379.3 301.5 L380.9 300.5 L381.2 298.6 Z" fill="#4e79a7" stroke="#333" stroke-width="1.05" stroke-linejoin="round"/><rect x="322" y="475" width="2.5" height="2" fill="#333"/><rect x="283.5" y="519" width="3.5" height="3.5" fill="#444"/></g></svg>
<div class="t" style="left:313.10px;top:281.67px;font-size:19.80px;color:#c2c2c2;transform:scaleX(1.0474);transform-origin:0 0;">1,124</div>
<div class="t" style="left:263.90px;top:342.07px;font-size:19.80px;color:#bdbdbd;transform:scaleX(1.1119);transform-origin:0 0;">211</div>
<div class="t" style="left:234.30px;top:388.96px;font-size:14.63px;color:#959595;transform:scaleX(1.0059);transform-origin:0 0;-webkit-text-stroke:0.25px #959595;">Ireland</div>
<div class="t" style="left:332.20px;top:417.44px;font-size:19.25px;color:#c4c4c4;transform:scaleX(0.9947);transform-origin:0 0;">52</div>
<div class="t" style="left:387.00px;top:429.92px;font-size:20.68px;color:#111;">2,159</div>
<div class="a" style="left:455px;top:610px;width:28px;height:30px;overflow:hidden"><div class="t" style="left:5.90px;top:8.14px;font-size:19.25px;color:#8a8a8a;transform:scaleX(0.9545);transform-origin:0 0;">France</div>
</div>
<div class="a" style="left:484.00px;top:131.00px;width:15.50px;height:515.00px;background:#f0f0f0;"></div>
<div class="a" style="left:484.00px;top:148.00px;width:15.00px;height:335.00px;background:#c8c8c8;"></div>
<svg style="left:486.5px;top:136px" width="10" height="6"><path d="M1 5L5 1L9 5" fill="none" stroke="#555" stroke-width="1.8"/></svg>
<svg style="left:486.5px;top:635px" width="10" height="6"><path d="M1 1L5 5L9 1" fill="none" stroke="#555" stroke-width="1.8"/></svg>
<div class="a" style="left:221.00px;top:648.00px;width:262.00px;height:15.50px;background:#f0f0f0;"></div>
<div class="a" style="left:290.00px;top:648.00px;width:107.00px;height:15.00px;background:#c8c8c8;"></div>
<svg style="left:226px;top:651px" width="6" height="10"><path d="M5 1L1 5L5 9" fill="none" stroke="#555" stroke-width="1.8"/></svg>
<svg style="left:472px;top:651px" width="6" height="10"><path d="M1 1L5 5L1 9" fill="none" stroke="#555" stroke-width="1.8"/></svg>
<div class="a" style="left:504.00px;top:84.00px;width:21.00px;height:83.00px;background:#666;border-radius:0 3px 3px 0;"></div>
<svg style="left:504px;top:84px" width="21" height="83"><path d="M5 5.5L15 14.8M15 5.5L5 14.8" stroke="#fff" stroke-width="1.4"/><path d="M9 26.5H4.5V35.8H13.8V31" fill="none" stroke="#fff" stroke-width="1.2"/><path d="M8.5 31L15 24.5M11 24.2H15.3V28.5" fill="none" stroke="#fff" stroke-width="1.4"/><path d="M4 46H17L12.3 52V58.8H8.7V52Z" fill="#fff"/><path d="M7 70.5H14L10.5 75Z" fill="#fff"/></svg>
<div class="a" style="left:0.00px;top:677.00px;width:1365.00px;height:1.00px;background:#c9c9c9;"></div>
<div class="a" style="left:0.00px;top:678.00px;width:1365.00px;height:29.00px;background:#e6e6e6;"></div>
<div class="a" style="left:0.00px;top:707.00px;width:1365.00px;height:1.00px;background:#cfcfcf;"></div>
<div class="a" style="left:129.00px;top:678.00px;width:1.00px;height:29.00px;background:#cdcdcd;"></div>
<div class="a" style="left:168.00px;top:678.00px;width:1.00px;height:29.00px;background:#cdcdcd;"></div>
<div class="a" style="left:223.00px;top:678.00px;width:1.00px;height:29.00px;background:#cdcdcd;"></div>
<div class="a" style="left:346.00px;top:678.00px;width:1.00px;height:29.00px;background:#cdcdcd;"></div>
<div class="a" style="left:493.00px;top:678.00px;width:1.00px;height:29.00px;background:#cdcdcd;"></div>
<div class="a" style="left:814.00px;top:678.00px;width:1.00px;height:29.00px;background:#cdcdcd;"></div>
<div class="a" style="left:846.00px;top:678.00px;width:1.00px;height:29.00px;background:#cdcdcd;"></div>
<div class="a" style="left:878.00px;top:678.00px;width:1.00px;height:29.00px;background:#cdcdcd;"></div>
<div class="a" style="left:910.00px;top:678.00px;width:1.00px;height:29.00px;background:#cdcdcd;"></div>
<div class="a" style="left:608.00px;top:677.00px;width:102.00px;height:30.00px;background:#fafafa;"></div>
<div class="a" style="left:608.00px;top:677.00px;width:1.00px;height:30.00px;background:#cdcdcd;"></div>
<div class="a" style="left:710.00px;top:677.00px;width:1.00px;height:30.00px;background:#cdcdcd;"></div>
<svg style="left:8px;top:686px" width="10" height="13"><path d="M0.6 2.5v7.5c0 1.2 1.9 2 4.2 2s4.2-.8 4.2-2V2.5" fill="none" stroke="#666" stroke-width="1"/><ellipse cx="4.8" cy="2.5" rx="4.2" ry="1.9" fill="none" stroke="#666" stroke-width="1"/></svg>
<div class="t" style="left:23.20px;top:686.41px;font-size:13.64px;color:#555;transform:scaleX(0.8942);transform-origin:0 0;">Data Source</div>
<div class="t" style="left:136.00px;top:686.41px;font-size:13.64px;color:#555;transform:scaleX(0.8668);transform-origin:0 0;">Map</div>
<div class="t" style="left:174.50px;top:686.41px;font-size:13.64px;color:#555;transform:scaleX(0.8902);transform-origin:0 0;">Gender</div>
<div class="t" style="left:229.40px;top:686.41px;font-size:13.64px;color:#555;transform:scaleX(0.9144);transform-origin:0 0;">Distribution by Age</div>
<div class="t" style="left:352.50px;top:686.41px;font-size:13.64px;color:#555;transform:scaleX(0.9089);transform-origin:0 0;">Distribution by Balance</div>
<div class="t" style="left:499.30px;top:686.41px;font-size:13.64px;color:#555;transform:scaleX(0.9017);transform-origin:0 0;">Job Classification</div>
<div class="t" style="left:632.30px;top:686.41px;font-size:13.64px;color:#444;font-weight:bold;transform:scaleX(0.8521);transform-origin:0 0;">Dashboard 1</div>
<div class="t" style="left:734.30px;top:686.41px;font-size:13.64px;color:#555;transform:scaleX(0.8898);transform-origin:0 0;">Dashboard 2</div>
<svg style="left:616px;top:686px" width="12" height="12"><rect x="0.5" y="0.5" width="10.5" height="10.5" fill="none" stroke="#555"/><path d="M5.75 0.5v10.5M0.5 5.75h10.5" stroke="#555"/></svg>
<svg style="left:718px;top:686px" width="12" height="12"><rect x="0.5" y="0.5" width="10.5" height="10.5" fill="none" stroke="#555"/><path d="M5.75 0.5v10.5M0.5 5.75h10.5" stroke="#555"/></svg>
<svg style="left:824px;top:685px" width="16" height="16"><path d="M10.5 7V0.5H0.5V10.5H7" fill="none" stroke="#555"/><path d="M3 8V6M5 8V4M7 8V5" stroke="#555"/><path d="M11 8v7M7.5 11.5h7" stroke="#444" stroke-width="1.8"/></svg>
<svg style="left:856px;top:685px" width="16" height="16"><path d="M10.5 7V0.5H0.5V10.5H7M5.5 0.5V10.5M0.5 5.5H10.5" fill="none" stroke="#555"/><path d="M11 8v7M7.5 11.5h7" stroke="#444" stroke-width="1.8"/></svg>
<svg style="left:888px;top:685px" width="16" height="16"><path d="M10.5 7V0.5L5.5 2V12L0.5 10.5V0.5L5.5 2" fill="none" stroke="#555"/><path d="M11 8v7M7.5 11.5h7" stroke="#444" stroke-width="1.8"/></svg>
<div class="a" style="left:0.00px;top:708.00px;width:1365.00px;height:19.00px;background:#e6e6e6;"></div>
<div class="a" style="left:0.00px;top:727.00px;width:1365.00px;height:1.00px;background:#f3f3f3;"></div>
<div class="a" style="left:0.00px;top:728.00px;width:1365.00px;height:1.00px;background:#142039;"></div>
<div class="t" style="left:2.00px;top:712.34px;font-size:12.54px;color:#222;transform:scaleX(0.8696);transform-origin:0 0;">1 of 4 marks</div>
<div class="t" style="left:80.00px;top:712.34px;font-size:12.54px;color:#222;transform:scaleX(0.8608);transform-origin:0 0;">1 row by 1 column</div>
<div class="t" style="left:186.00px;top:712.34px;font-size:12.54px;color:#222;transform:scaleX(0.8947);transform-origin:0 0;">SUM(Number of Records): 2,159</div>
<div class="a" style="left:1226.50px;top:708.00px;width:1.00px;height:20.00px;background:#cfcfcf;"></div>
<div class="a" style="left:1297.50px;top:708.00px;width:1.00px;height:20.00px;background:#cfcfcf;"></div>
<svg style="left:1234px;top:712px" width="60" height="12"><g fill="#b5b5b5"><rect x="2" y="1.5" width="1.2" height="9"/><path d="M9 1.5V10.5L4 6Z"/><path d="M22 1.5V10.5L17 6Z"/><path d="M33 1.5V10.5L38 6Z"/><path d="M47 1.5V10.5L52 6Z"/><rect x="53" y="1.5" width="1.2" height="9"/></g></svg>
<svg style="left:1306px;top:712px" width="60" height="12"><g fill="#b5b5b5"><rect x="0" y="0" width="3" height="3"/><rect x="4" y="0" width="3" height="3"/><rect x="8" y="0" width="3" height="3"/><rect x="0" y="4" width="3" height="3"/><rect x="4" y="4" width="3" height="3"/><rect x="8" y="4" width="3" height="3"/><rect x="0" y="8" width="3" height="3"/><rect x="4" y="8" width="3" height="3"/><rect x="8" y="8" width="3" height="3"/><rect x="21" y="0" width="11" height="6.5"/><rect x="21" y="8" width="3" height="3"/><rect x="25" y="8" width="3" height="3"/><rect x="29" y="8" width="3" height="3"/></g><rect x="42" y="0" width="11" height="11" fill="#666"/></svg>
</body></html>
